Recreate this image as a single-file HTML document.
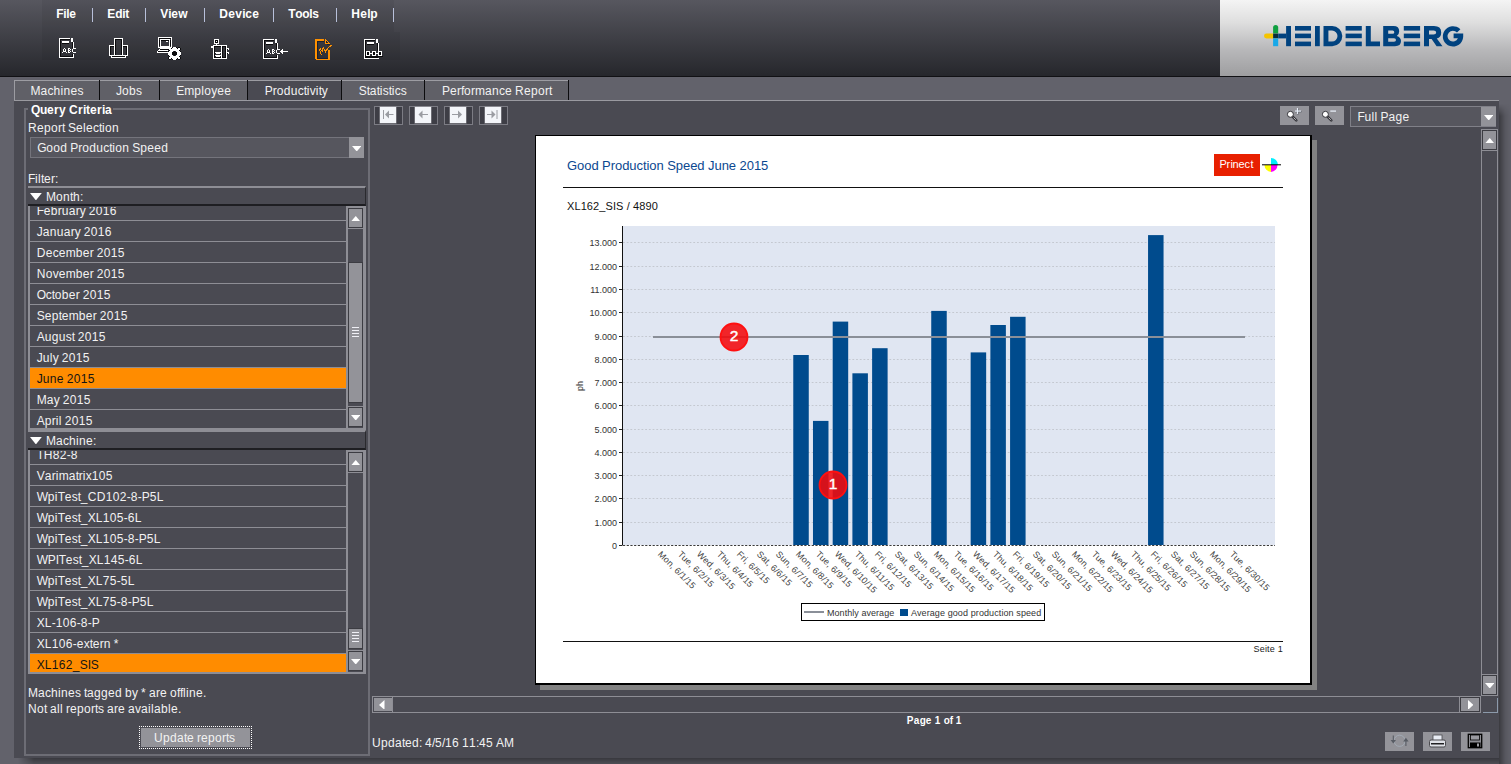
<!DOCTYPE html>
<html><head><meta charset="utf-8"><title>Prinect Analyze Point</title>
<style>
html,body{margin:0;padding:0;}
body{width:1511px;height:764px;overflow:hidden;position:relative;font-family:"Liberation Sans",sans-serif;background:#62626b;}
.b{position:absolute;}
.t{position:absolute;white-space:nowrap;font-family:"Liberation Sans",sans-serif;}
.clip{position:absolute;overflow:hidden;}
.t i{font-style:normal;display:inline-block;}
</style></head><body>
<div class="b" style="left:0px;top:77px;width:1511px;height:687px;background:#62626b;"></div>
<div class="b" style="left:0px;top:0px;width:1511px;height:76px;background:linear-gradient(#57575f,#26272c);"></div>
<div class="b" style="left:0px;top:76px;width:1511px;height:1px;background:#111114;"></div>
<div class="b" style="left:42px;top:0px;width:352px;height:32px;background:rgba(0,0,0,0.05);"></div>
<div class="b" style="left:42px;top:32px;width:358px;height:28px;background:rgba(0,0,0,0.05);"></div>
<div class="b" style="left:1220px;top:0px;width:291px;height:76px;background:linear-gradient(#f4f4f4 0%,#dedede 30%,#b8b8ba 65%,#9e9ea0 100%);"></div>
<div class="t" style="left:56.2px;top:7.84px;font-size:12px;line-height:12px;color:#ffffff;font-weight:bold;"><i style="width:7px">F</i><i style="width:3px">i</i><i style="width:3px">l</i><i style="width:7px">e</i></div>
<div class="t" style="left:107.2px;top:7.84px;font-size:12px;line-height:12px;color:#ffffff;font-weight:bold;"><i style="width:8px">E</i><i style="width:7px">d</i><i style="width:3px">i</i><i style="width:4px">t</i></div>
<div class="t" style="left:160.2px;top:7.84px;font-size:12px;line-height:12px;color:#ffffff;font-weight:bold;"><i style="width:8px">V</i><i style="width:3px">i</i><i style="width:7px">e</i><i style="width:9px">w</i></div>
<div class="t" style="left:219.2px;top:7.84px;font-size:12px;line-height:12px;color:#ffffff;font-weight:bold;"><i style="width:9px">D</i><i style="width:7px">e</i><i style="width:7px">v</i><i style="width:3px">i</i><i style="width:7px">c</i><i style="width:7px">e</i></div>
<div class="t" style="left:288.2px;top:7.84px;font-size:12px;line-height:12px;color:#ffffff;font-weight:bold;"><i style="width:7px">T</i><i style="width:7px">o</i><i style="width:7px">o</i><i style="width:3px">l</i><i style="width:7px">s</i></div>
<div class="t" style="left:351.2px;top:7.84px;font-size:12px;line-height:12px;color:#ffffff;font-weight:bold;"><i style="width:9px">H</i><i style="width:7px">e</i><i style="width:3px">l</i><i style="width:7px">p</i></div>
<div class="b" style="left:92px;top:8px;width:1px;height:14px;background:#b8c0da;"></div>
<div class="b" style="left:145px;top:8px;width:1px;height:14px;background:#b8c0da;"></div>
<div class="b" style="left:204px;top:8px;width:1px;height:14px;background:#b8c0da;"></div>
<div class="b" style="left:273px;top:8px;width:1px;height:14px;background:#b8c0da;"></div>
<div class="b" style="left:336px;top:8px;width:1px;height:14px;background:#b8c0da;"></div>
<div class="b" style="left:393px;top:8px;width:1px;height:14px;background:#b8c0da;"></div>
<svg class="b" style="left:55px;top:38px" width="22" height="20" shape-rendering="crispEdges"><rect x="4" y="0" width="11" height="1" fill="#ffffff"/><rect x="16" y="0" width="2" height="1" fill="#ffffff"/><rect x="4" y="1" width="1" height="1" fill="#ffffff"/><rect x="5" y="1" width="10" height="1" fill="#0a0a0c"/><rect x="16" y="1" width="2" height="1" fill="#ffffff"/><rect x="4" y="2" width="1" height="1" fill="#ffffff"/><rect x="5" y="2" width="1" height="1" fill="#0a0a0c"/><rect x="16" y="2" width="2" height="1" fill="#ffffff"/><rect x="4" y="3" width="1" height="1" fill="#ffffff"/><rect x="5" y="3" width="1" height="1" fill="#0a0a0c"/><rect x="7" y="3" width="7" height="1" fill="#ffffff"/><rect x="16" y="3" width="2" height="1" fill="#ffffff"/><rect x="4" y="4" width="1" height="1" fill="#ffffff"/><rect x="5" y="4" width="1" height="1" fill="#0a0a0c"/><rect x="7" y="4" width="7" height="1" fill="#ffffff"/><rect x="17" y="4" width="1" height="1" fill="#0a0a0c"/><rect x="18" y="4" width="1" height="1" fill="#ffffff"/><rect x="4" y="5" width="1" height="1" fill="#ffffff"/><rect x="5" y="5" width="1" height="1" fill="#0a0a0c"/><rect x="7" y="5" width="7" height="1" fill="#0a0a0c"/><rect x="17" y="5" width="1" height="1" fill="#0a0a0c"/><rect x="18" y="5" width="1" height="1" fill="#ffffff"/><rect x="4" y="6" width="1" height="1" fill="#ffffff"/><rect x="5" y="6" width="1" height="1" fill="#0a0a0c"/><rect x="17" y="6" width="1" height="1" fill="#0a0a0c"/><rect x="18" y="6" width="1" height="1" fill="#ffffff"/><rect x="4" y="7" width="1" height="1" fill="#ffffff"/><rect x="5" y="7" width="1" height="1" fill="#0a0a0c"/><rect x="17" y="7" width="1" height="1" fill="#0a0a0c"/><rect x="18" y="7" width="1" height="1" fill="#ffffff"/><rect x="4" y="8" width="1" height="1" fill="#ffffff"/><rect x="5" y="8" width="1" height="1" fill="#0a0a0c"/><rect x="17" y="8" width="1" height="1" fill="#0a0a0c"/><rect x="18" y="8" width="1" height="1" fill="#ffffff"/><rect x="4" y="9" width="1" height="1" fill="#ffffff"/><rect x="5" y="9" width="1" height="1" fill="#0a0a0c"/><rect x="17" y="9" width="1" height="1" fill="#0a0a0c"/><rect x="18" y="9" width="1" height="1" fill="#ffffff"/><rect x="4" y="10" width="1" height="1" fill="#ffffff"/><rect x="5" y="10" width="1" height="1" fill="#0a0a0c"/><rect x="9" y="10" width="1" height="1" fill="#ffffff"/><rect x="13" y="10" width="2" height="1" fill="#ffffff"/><rect x="18" y="10" width="3" height="1" fill="#ffffff"/><rect x="4" y="11" width="1" height="1" fill="#ffffff"/><rect x="5" y="11" width="1" height="1" fill="#0a0a0c"/><rect x="8" y="11" width="1" height="1" fill="#ffffff"/><rect x="10" y="11" width="1" height="1" fill="#ffffff"/><rect x="13" y="11" width="1" height="1" fill="#ffffff"/><rect x="15" y="11" width="1" height="1" fill="#ffffff"/><rect x="17" y="11" width="1" height="1" fill="#ffffff"/><rect x="4" y="12" width="1" height="1" fill="#ffffff"/><rect x="5" y="12" width="1" height="1" fill="#0a0a0c"/><rect x="8" y="12" width="1" height="1" fill="#ffffff"/><rect x="10" y="12" width="1" height="1" fill="#ffffff"/><rect x="13" y="12" width="2" height="1" fill="#ffffff"/><rect x="17" y="12" width="1" height="1" fill="#ffffff"/><rect x="4" y="13" width="1" height="1" fill="#ffffff"/><rect x="5" y="13" width="1" height="1" fill="#0a0a0c"/><rect x="8" y="13" width="3" height="1" fill="#ffffff"/><rect x="13" y="13" width="1" height="1" fill="#ffffff"/><rect x="15" y="13" width="1" height="1" fill="#ffffff"/><rect x="17" y="13" width="1" height="1" fill="#ffffff"/><rect x="4" y="14" width="1" height="1" fill="#ffffff"/><rect x="5" y="14" width="1" height="1" fill="#0a0a0c"/><rect x="7" y="14" width="1" height="1" fill="#ffffff"/><rect x="11" y="14" width="1" height="1" fill="#ffffff"/><rect x="13" y="14" width="2" height="1" fill="#ffffff"/><rect x="18" y="14" width="3" height="1" fill="#ffffff"/><rect x="4" y="15" width="1" height="1" fill="#ffffff"/><rect x="5" y="15" width="1" height="1" fill="#0a0a0c"/><rect x="4" y="16" width="1" height="1" fill="#ffffff"/><rect x="5" y="16" width="1" height="1" fill="#0a0a0c"/><rect x="17" y="16" width="1" height="1" fill="#0a0a0c"/><rect x="18" y="16" width="1" height="1" fill="#ffffff"/><rect x="4" y="17" width="1" height="1" fill="#ffffff"/><rect x="5" y="17" width="1" height="1" fill="#0a0a0c"/><rect x="17" y="17" width="1" height="1" fill="#0a0a0c"/><rect x="18" y="17" width="1" height="1" fill="#ffffff"/><rect x="4" y="18" width="1" height="1" fill="#ffffff"/><rect x="5" y="18" width="13" height="1" fill="#0a0a0c"/><rect x="18" y="18" width="1" height="1" fill="#ffffff"/><rect x="4" y="19" width="15" height="1" fill="#ffffff"/></svg><svg class="b" style="left:105px;top:38px" width="25" height="20" shape-rendering="crispEdges"><rect x="9" y="0" width="9" height="1" fill="#ffffff"/><rect x="9" y="1" width="1" height="1" fill="#ffffff"/><rect x="10" y="1" width="7" height="1" fill="#0a0a0c"/><rect x="17" y="1" width="1" height="1" fill="#ffffff"/><rect x="9" y="2" width="1" height="1" fill="#ffffff"/><rect x="10" y="2" width="1" height="1" fill="#0a0a0c"/><rect x="16" y="2" width="1" height="1" fill="#0a0a0c"/><rect x="17" y="2" width="1" height="1" fill="#ffffff"/><rect x="9" y="3" width="1" height="1" fill="#ffffff"/><rect x="10" y="3" width="1" height="1" fill="#0a0a0c"/><rect x="16" y="3" width="1" height="1" fill="#0a0a0c"/><rect x="17" y="3" width="1" height="1" fill="#ffffff"/><rect x="9" y="4" width="1" height="1" fill="#ffffff"/><rect x="10" y="4" width="1" height="1" fill="#0a0a0c"/><rect x="16" y="4" width="1" height="1" fill="#0a0a0c"/><rect x="17" y="4" width="1" height="1" fill="#ffffff"/><rect x="9" y="5" width="1" height="1" fill="#ffffff"/><rect x="10" y="5" width="1" height="1" fill="#0a0a0c"/><rect x="16" y="5" width="1" height="1" fill="#0a0a0c"/><rect x="17" y="5" width="1" height="1" fill="#ffffff"/><rect x="9" y="6" width="1" height="1" fill="#ffffff"/><rect x="10" y="6" width="1" height="1" fill="#0a0a0c"/><rect x="16" y="6" width="1" height="1" fill="#0a0a0c"/><rect x="17" y="6" width="1" height="1" fill="#ffffff"/><rect x="4" y="7" width="6" height="1" fill="#ffffff"/><rect x="10" y="7" width="1" height="1" fill="#0a0a0c"/><rect x="16" y="7" width="1" height="1" fill="#0a0a0c"/><rect x="17" y="7" width="6" height="1" fill="#ffffff"/><rect x="4" y="8" width="1" height="1" fill="#ffffff"/><rect x="5" y="8" width="4" height="1" fill="#0a0a0c"/><rect x="9" y="8" width="1" height="1" fill="#ffffff"/><rect x="10" y="8" width="1" height="1" fill="#0a0a0c"/><rect x="16" y="8" width="1" height="1" fill="#0a0a0c"/><rect x="17" y="8" width="1" height="1" fill="#ffffff"/><rect x="18" y="8" width="4" height="1" fill="#0a0a0c"/><rect x="22" y="8" width="1" height="1" fill="#ffffff"/><rect x="4" y="9" width="1" height="1" fill="#ffffff"/><rect x="5" y="9" width="1" height="1" fill="#0a0a0c"/><rect x="9" y="9" width="1" height="1" fill="#ffffff"/><rect x="10" y="9" width="1" height="1" fill="#0a0a0c"/><rect x="16" y="9" width="1" height="1" fill="#0a0a0c"/><rect x="17" y="9" width="1" height="1" fill="#ffffff"/><rect x="21" y="9" width="1" height="1" fill="#0a0a0c"/><rect x="22" y="9" width="1" height="1" fill="#ffffff"/><rect x="4" y="10" width="1" height="1" fill="#ffffff"/><rect x="5" y="10" width="1" height="1" fill="#0a0a0c"/><rect x="9" y="10" width="1" height="1" fill="#ffffff"/><rect x="10" y="10" width="1" height="1" fill="#0a0a0c"/><rect x="16" y="10" width="1" height="1" fill="#0a0a0c"/><rect x="17" y="10" width="1" height="1" fill="#ffffff"/><rect x="21" y="10" width="1" height="1" fill="#0a0a0c"/><rect x="22" y="10" width="1" height="1" fill="#ffffff"/><rect x="4" y="11" width="1" height="1" fill="#ffffff"/><rect x="5" y="11" width="1" height="1" fill="#0a0a0c"/><rect x="9" y="11" width="1" height="1" fill="#ffffff"/><rect x="10" y="11" width="1" height="1" fill="#0a0a0c"/><rect x="16" y="11" width="1" height="1" fill="#0a0a0c"/><rect x="17" y="11" width="1" height="1" fill="#ffffff"/><rect x="21" y="11" width="1" height="1" fill="#0a0a0c"/><rect x="22" y="11" width="1" height="1" fill="#ffffff"/><rect x="4" y="12" width="1" height="1" fill="#ffffff"/><rect x="5" y="12" width="1" height="1" fill="#0a0a0c"/><rect x="9" y="12" width="1" height="1" fill="#ffffff"/><rect x="10" y="12" width="1" height="1" fill="#0a0a0c"/><rect x="16" y="12" width="1" height="1" fill="#0a0a0c"/><rect x="17" y="12" width="1" height="1" fill="#ffffff"/><rect x="21" y="12" width="1" height="1" fill="#0a0a0c"/><rect x="22" y="12" width="1" height="1" fill="#ffffff"/><rect x="4" y="13" width="1" height="1" fill="#ffffff"/><rect x="5" y="13" width="1" height="1" fill="#0a0a0c"/><rect x="9" y="13" width="1" height="1" fill="#ffffff"/><rect x="10" y="13" width="1" height="1" fill="#0a0a0c"/><rect x="16" y="13" width="1" height="1" fill="#0a0a0c"/><rect x="17" y="13" width="1" height="1" fill="#ffffff"/><rect x="21" y="13" width="1" height="1" fill="#0a0a0c"/><rect x="22" y="13" width="1" height="1" fill="#ffffff"/><rect x="4" y="14" width="1" height="1" fill="#ffffff"/><rect x="5" y="14" width="1" height="1" fill="#0a0a0c"/><rect x="9" y="14" width="1" height="1" fill="#ffffff"/><rect x="10" y="14" width="1" height="1" fill="#0a0a0c"/><rect x="16" y="14" width="1" height="1" fill="#0a0a0c"/><rect x="17" y="14" width="1" height="1" fill="#ffffff"/><rect x="21" y="14" width="1" height="1" fill="#0a0a0c"/><rect x="22" y="14" width="1" height="1" fill="#ffffff"/><rect x="4" y="15" width="1" height="1" fill="#ffffff"/><rect x="5" y="15" width="1" height="1" fill="#0a0a0c"/><rect x="9" y="15" width="1" height="1" fill="#ffffff"/><rect x="10" y="15" width="1" height="1" fill="#0a0a0c"/><rect x="16" y="15" width="1" height="1" fill="#0a0a0c"/><rect x="17" y="15" width="1" height="1" fill="#ffffff"/><rect x="21" y="15" width="1" height="1" fill="#0a0a0c"/><rect x="22" y="15" width="1" height="1" fill="#ffffff"/><rect x="4" y="16" width="1" height="1" fill="#ffffff"/><rect x="5" y="16" width="1" height="1" fill="#0a0a0c"/><rect x="9" y="16" width="1" height="1" fill="#ffffff"/><rect x="10" y="16" width="1" height="1" fill="#0a0a0c"/><rect x="16" y="16" width="1" height="1" fill="#0a0a0c"/><rect x="17" y="16" width="1" height="1" fill="#ffffff"/><rect x="21" y="16" width="1" height="1" fill="#0a0a0c"/><rect x="22" y="16" width="1" height="1" fill="#ffffff"/><rect x="4" y="17" width="19" height="1" fill="#ffffff"/><rect x="6" y="18" width="1" height="1" fill="#ffffff"/><rect x="7" y="18" width="13" height="1" fill="#0a0a0c"/><rect x="20" y="18" width="1" height="1" fill="#ffffff"/><rect x="6" y="19" width="15" height="1" fill="#ffffff"/></svg><svg class="b" style="left:154px;top:35px" width="27" height="25" shape-rendering="crispEdges"><rect x="4" y="2" width="14" height="1" fill="#ffffff"/><rect x="4" y="3" width="1" height="1" fill="#ffffff"/><rect x="5" y="3" width="12" height="1" fill="#0a0a0c"/><rect x="17" y="3" width="1" height="1" fill="#ffffff"/><rect x="4" y="4" width="1" height="1" fill="#ffffff"/><rect x="6" y="4" width="10" height="1" fill="#ffffff"/><rect x="17" y="4" width="1" height="1" fill="#ffffff"/><rect x="4" y="5" width="1" height="1" fill="#ffffff"/><rect x="5" y="5" width="1" height="1" fill="#0a0a0c"/><rect x="6" y="5" width="1" height="1" fill="#ffffff"/><rect x="7" y="5" width="8" height="1" fill="#0a0a0c"/><rect x="15" y="5" width="1" height="1" fill="#ffffff"/><rect x="16" y="5" width="1" height="1" fill="#0a0a0c"/><rect x="17" y="5" width="1" height="1" fill="#ffffff"/><rect x="4" y="6" width="1" height="1" fill="#ffffff"/><rect x="5" y="6" width="1" height="1" fill="#0a0a0c"/><rect x="6" y="6" width="1" height="1" fill="#ffffff"/><rect x="12" y="6" width="2" height="1" fill="#ffffff"/><rect x="15" y="6" width="1" height="1" fill="#ffffff"/><rect x="16" y="6" width="1" height="1" fill="#0a0a0c"/><rect x="17" y="6" width="1" height="1" fill="#ffffff"/><rect x="4" y="7" width="1" height="1" fill="#ffffff"/><rect x="5" y="7" width="1" height="1" fill="#0a0a0c"/><rect x="6" y="7" width="1" height="1" fill="#ffffff"/><rect x="15" y="7" width="1" height="1" fill="#ffffff"/><rect x="16" y="7" width="1" height="1" fill="#0a0a0c"/><rect x="17" y="7" width="1" height="1" fill="#ffffff"/><rect x="4" y="8" width="1" height="1" fill="#ffffff"/><rect x="5" y="8" width="1" height="1" fill="#0a0a0c"/><rect x="6" y="8" width="1" height="1" fill="#ffffff"/><rect x="15" y="8" width="1" height="1" fill="#ffffff"/><rect x="16" y="8" width="1" height="1" fill="#0a0a0c"/><rect x="17" y="8" width="1" height="1" fill="#ffffff"/><rect x="4" y="9" width="1" height="1" fill="#ffffff"/><rect x="5" y="9" width="1" height="1" fill="#0a0a0c"/><rect x="6" y="9" width="1" height="1" fill="#ffffff"/><rect x="15" y="9" width="1" height="1" fill="#ffffff"/><rect x="16" y="9" width="1" height="1" fill="#0a0a0c"/><rect x="17" y="9" width="1" height="1" fill="#ffffff"/><rect x="4" y="10" width="1" height="1" fill="#ffffff"/><rect x="5" y="10" width="1" height="1" fill="#0a0a0c"/><rect x="6" y="10" width="1" height="1" fill="#ffffff"/><rect x="15" y="10" width="1" height="1" fill="#ffffff"/><rect x="16" y="10" width="1" height="1" fill="#0a0a0c"/><rect x="17" y="10" width="1" height="1" fill="#ffffff"/><rect x="4" y="11" width="1" height="1" fill="#ffffff"/><rect x="6" y="11" width="10" height="1" fill="#ffffff"/><rect x="17" y="11" width="1" height="1" fill="#ffffff"/><rect x="4" y="12" width="14" height="1" fill="#ffffff"/><rect x="18" y="12" width="1" height="1" fill="#0a0a0c"/><rect x="19" y="12" width="3" height="1" fill="#ffffff"/><rect x="22" y="12" width="1" height="1" fill="#0a0a0c"/><rect x="24" y="12" width="2" height="1" fill="#0a0a0c"/><rect x="6" y="13" width="11" height="1" fill="#ffffff"/><rect x="17" y="13" width="1" height="1" fill="#0a0a0c"/><rect x="18" y="13" width="5" height="1" fill="#ffffff"/><rect x="23" y="13" width="1" height="1" fill="#0a0a0c"/><rect x="24" y="13" width="2" height="1" fill="#ffffff"/><rect x="26" y="13" width="1" height="1" fill="#0a0a0c"/><rect x="5" y="14" width="1" height="1" fill="#ffffff"/><rect x="6" y="14" width="9" height="1" fill="#0a0a0c"/><rect x="15" y="14" width="11" height="1" fill="#ffffff"/><rect x="26" y="14" width="1" height="1" fill="#0a0a0c"/><rect x="4" y="15" width="10" height="1" fill="#ffffff"/><rect x="15" y="15" width="1" height="1" fill="#0a0a0c"/><rect x="16" y="15" width="9" height="1" fill="#ffffff"/><rect x="25" y="15" width="1" height="1" fill="#0a0a0c"/><rect x="3" y="16" width="1" height="1" fill="#ffffff"/><rect x="4" y="16" width="9" height="1" fill="#0a0a0c"/><rect x="14" y="16" width="1" height="1" fill="#0a0a0c"/><rect x="15" y="16" width="4" height="1" fill="#ffffff"/><rect x="20" y="16" width="1" height="1" fill="#0a0a0c"/><rect x="22" y="16" width="4" height="1" fill="#ffffff"/><rect x="26" y="16" width="1" height="1" fill="#0a0a0c"/><rect x="3" y="17" width="15" height="1" fill="#ffffff"/><rect x="18" y="17" width="5" height="1" fill="#0a0a0c"/><rect x="23" y="17" width="4" height="1" fill="#ffffff"/><rect x="14" y="18" width="4" height="1" fill="#ffffff"/><rect x="18" y="18" width="5" height="1" fill="#0a0a0c"/><rect x="23" y="18" width="4" height="1" fill="#ffffff"/><rect x="14" y="19" width="4" height="1" fill="#ffffff"/><rect x="18" y="19" width="5" height="1" fill="#0a0a0c"/><rect x="23" y="19" width="4" height="1" fill="#ffffff"/><rect x="14" y="20" width="1" height="1" fill="#0a0a0c"/><rect x="15" y="20" width="4" height="1" fill="#ffffff"/><rect x="20" y="20" width="1" height="1" fill="#0a0a0c"/><rect x="22" y="20" width="4" height="1" fill="#ffffff"/><rect x="26" y="20" width="1" height="1" fill="#0a0a0c"/><rect x="15" y="21" width="1" height="1" fill="#0a0a0c"/><rect x="16" y="21" width="9" height="1" fill="#ffffff"/><rect x="25" y="21" width="1" height="1" fill="#0a0a0c"/><rect x="14" y="22" width="1" height="1" fill="#0a0a0c"/><rect x="15" y="22" width="11" height="1" fill="#ffffff"/><rect x="26" y="22" width="1" height="1" fill="#0a0a0c"/><rect x="14" y="23" width="1" height="1" fill="#0a0a0c"/><rect x="15" y="23" width="2" height="1" fill="#ffffff"/><rect x="17" y="23" width="1" height="1" fill="#0a0a0c"/><rect x="18" y="23" width="5" height="1" fill="#ffffff"/><rect x="23" y="23" width="1" height="1" fill="#0a0a0c"/><rect x="24" y="23" width="2" height="1" fill="#ffffff"/><rect x="26" y="23" width="1" height="1" fill="#0a0a0c"/><rect x="15" y="24" width="2" height="1" fill="#0a0a0c"/><rect x="18" y="24" width="1" height="1" fill="#0a0a0c"/><rect x="19" y="24" width="3" height="1" fill="#ffffff"/><rect x="22" y="24" width="1" height="1" fill="#0a0a0c"/><rect x="24" y="24" width="2" height="1" fill="#0a0a0c"/></svg><svg class="b" style="left:208px;top:39px" width="25" height="20" shape-rendering="crispEdges"><rect x="6" y="0" width="5" height="1" fill="#ffffff"/><rect x="6" y="1" width="1" height="1" fill="#ffffff"/><rect x="7" y="1" width="3" height="1" fill="#0a0a0c"/><rect x="10" y="1" width="1" height="1" fill="#ffffff"/><rect x="6" y="2" width="1" height="1" fill="#ffffff"/><rect x="7" y="2" width="1" height="1" fill="#0a0a0c"/><rect x="8" y="2" width="1" height="1" fill="#ffffff"/><rect x="9" y="2" width="1" height="1" fill="#0a0a0c"/><rect x="10" y="2" width="1" height="1" fill="#ffffff"/><rect x="6" y="3" width="1" height="1" fill="#ffffff"/><rect x="7" y="3" width="3" height="1" fill="#0a0a0c"/><rect x="10" y="3" width="1" height="1" fill="#ffffff"/><rect x="6" y="4" width="5" height="1" fill="#ffffff"/><rect x="8" y="5" width="1" height="1" fill="#ffffff"/><rect x="5" y="6" width="14" height="1" fill="#ffffff"/><rect x="3" y="7" width="3" height="1" fill="#ffffff"/><rect x="6" y="7" width="7" height="1" fill="#0a0a0c"/><rect x="13" y="7" width="1" height="1" fill="#ffffff"/><rect x="14" y="7" width="4" height="1" fill="#0a0a0c"/><rect x="18" y="7" width="1" height="1" fill="#ffffff"/><rect x="3" y="8" width="3" height="1" fill="#ffffff"/><rect x="6" y="8" width="1" height="1" fill="#0a0a0c"/><rect x="13" y="8" width="1" height="1" fill="#ffffff"/><rect x="14" y="8" width="1" height="1" fill="#0a0a0c"/><rect x="17" y="8" width="1" height="1" fill="#0a0a0c"/><rect x="18" y="8" width="1" height="1" fill="#ffffff"/><rect x="5" y="9" width="1" height="1" fill="#ffffff"/><rect x="6" y="9" width="1" height="1" fill="#0a0a0c"/><rect x="13" y="9" width="1" height="1" fill="#ffffff"/><rect x="14" y="9" width="1" height="1" fill="#0a0a0c"/><rect x="17" y="9" width="1" height="1" fill="#0a0a0c"/><rect x="18" y="9" width="3" height="1" fill="#ffffff"/><rect x="5" y="10" width="1" height="1" fill="#ffffff"/><rect x="6" y="10" width="1" height="1" fill="#0a0a0c"/><rect x="13" y="10" width="1" height="1" fill="#ffffff"/><rect x="14" y="10" width="1" height="1" fill="#0a0a0c"/><rect x="17" y="10" width="1" height="1" fill="#0a0a0c"/><rect x="18" y="10" width="1" height="1" fill="#ffffff"/><rect x="19" y="10" width="1" height="1" fill="#0a0a0c"/><rect x="20" y="10" width="1" height="1" fill="#ffffff"/><rect x="5" y="11" width="1" height="1" fill="#ffffff"/><rect x="6" y="11" width="1" height="1" fill="#0a0a0c"/><rect x="13" y="11" width="1" height="1" fill="#ffffff"/><rect x="14" y="11" width="1" height="1" fill="#0a0a0c"/><rect x="17" y="11" width="1" height="1" fill="#0a0a0c"/><rect x="18" y="11" width="1" height="1" fill="#ffffff"/><rect x="5" y="12" width="1" height="1" fill="#ffffff"/><rect x="6" y="12" width="1" height="1" fill="#0a0a0c"/><rect x="13" y="12" width="1" height="1" fill="#ffffff"/><rect x="14" y="12" width="1" height="1" fill="#0a0a0c"/><rect x="17" y="12" width="1" height="1" fill="#0a0a0c"/><rect x="18" y="12" width="1" height="1" fill="#ffffff"/><rect x="5" y="13" width="1" height="1" fill="#ffffff"/><rect x="6" y="13" width="1" height="1" fill="#0a0a0c"/><rect x="7" y="13" width="7" height="1" fill="#ffffff"/><rect x="14" y="13" width="1" height="1" fill="#0a0a0c"/><rect x="17" y="13" width="1" height="1" fill="#0a0a0c"/><rect x="18" y="13" width="3" height="1" fill="#ffffff"/><rect x="5" y="14" width="1" height="1" fill="#ffffff"/><rect x="6" y="14" width="1" height="1" fill="#0a0a0c"/><rect x="8" y="14" width="4" height="1" fill="#ffffff"/><rect x="13" y="14" width="1" height="1" fill="#ffffff"/><rect x="14" y="14" width="1" height="1" fill="#0a0a0c"/><rect x="17" y="14" width="1" height="1" fill="#0a0a0c"/><rect x="18" y="14" width="1" height="1" fill="#ffffff"/><rect x="19" y="14" width="1" height="1" fill="#0a0a0c"/><rect x="20" y="14" width="1" height="1" fill="#ffffff"/><rect x="5" y="15" width="1" height="1" fill="#ffffff"/><rect x="6" y="15" width="1" height="1" fill="#0a0a0c"/><rect x="13" y="15" width="1" height="1" fill="#ffffff"/><rect x="14" y="15" width="1" height="1" fill="#0a0a0c"/><rect x="17" y="15" width="1" height="1" fill="#0a0a0c"/><rect x="18" y="15" width="1" height="1" fill="#ffffff"/><rect x="5" y="16" width="1" height="1" fill="#ffffff"/><rect x="6" y="16" width="1" height="1" fill="#0a0a0c"/><rect x="7" y="16" width="7" height="1" fill="#ffffff"/><rect x="14" y="16" width="1" height="1" fill="#0a0a0c"/><rect x="17" y="16" width="1" height="1" fill="#0a0a0c"/><rect x="18" y="16" width="1" height="1" fill="#ffffff"/><rect x="5" y="17" width="1" height="1" fill="#ffffff"/><rect x="6" y="17" width="1" height="1" fill="#0a0a0c"/><rect x="8" y="17" width="4" height="1" fill="#ffffff"/><rect x="13" y="17" width="1" height="1" fill="#ffffff"/><rect x="14" y="17" width="1" height="1" fill="#0a0a0c"/><rect x="17" y="17" width="1" height="1" fill="#0a0a0c"/><rect x="18" y="17" width="1" height="1" fill="#ffffff"/><rect x="5" y="18" width="1" height="1" fill="#ffffff"/><rect x="6" y="18" width="7" height="1" fill="#0a0a0c"/><rect x="13" y="18" width="1" height="1" fill="#ffffff"/><rect x="14" y="18" width="4" height="1" fill="#0a0a0c"/><rect x="18" y="18" width="1" height="1" fill="#ffffff"/><rect x="5" y="19" width="14" height="1" fill="#ffffff"/></svg><svg class="b" style="left:260px;top:39px" width="29" height="20" shape-rendering="crispEdges"><rect x="3" y="0" width="11" height="1" fill="#ffffff"/><rect x="15" y="0" width="2" height="1" fill="#ffffff"/><rect x="3" y="1" width="1" height="1" fill="#ffffff"/><rect x="4" y="1" width="10" height="1" fill="#0a0a0c"/><rect x="15" y="1" width="2" height="1" fill="#ffffff"/><rect x="3" y="2" width="1" height="1" fill="#ffffff"/><rect x="4" y="2" width="1" height="1" fill="#0a0a0c"/><rect x="15" y="2" width="2" height="1" fill="#ffffff"/><rect x="3" y="3" width="1" height="1" fill="#ffffff"/><rect x="4" y="3" width="1" height="1" fill="#0a0a0c"/><rect x="6" y="3" width="7" height="1" fill="#ffffff"/><rect x="15" y="3" width="2" height="1" fill="#ffffff"/><rect x="3" y="4" width="1" height="1" fill="#ffffff"/><rect x="4" y="4" width="1" height="1" fill="#0a0a0c"/><rect x="6" y="4" width="7" height="1" fill="#ffffff"/><rect x="16" y="4" width="1" height="1" fill="#0a0a0c"/><rect x="17" y="4" width="1" height="1" fill="#ffffff"/><rect x="3" y="5" width="1" height="1" fill="#ffffff"/><rect x="4" y="5" width="1" height="1" fill="#0a0a0c"/><rect x="6" y="5" width="7" height="1" fill="#0a0a0c"/><rect x="16" y="5" width="1" height="1" fill="#0a0a0c"/><rect x="17" y="5" width="1" height="1" fill="#ffffff"/><rect x="3" y="6" width="1" height="1" fill="#ffffff"/><rect x="4" y="6" width="1" height="1" fill="#0a0a0c"/><rect x="16" y="6" width="1" height="1" fill="#0a0a0c"/><rect x="17" y="6" width="1" height="1" fill="#ffffff"/><rect x="3" y="7" width="1" height="1" fill="#ffffff"/><rect x="4" y="7" width="1" height="1" fill="#0a0a0c"/><rect x="16" y="7" width="1" height="1" fill="#0a0a0c"/><rect x="17" y="7" width="1" height="1" fill="#ffffff"/><rect x="3" y="8" width="1" height="1" fill="#ffffff"/><rect x="4" y="8" width="1" height="1" fill="#0a0a0c"/><rect x="16" y="8" width="1" height="1" fill="#0a0a0c"/><rect x="17" y="8" width="1" height="1" fill="#ffffff"/><rect x="3" y="9" width="1" height="1" fill="#ffffff"/><rect x="4" y="9" width="1" height="1" fill="#0a0a0c"/><rect x="16" y="9" width="1" height="1" fill="#0a0a0c"/><rect x="17" y="9" width="1" height="1" fill="#ffffff"/><rect x="3" y="10" width="1" height="1" fill="#ffffff"/><rect x="4" y="10" width="1" height="1" fill="#0a0a0c"/><rect x="8" y="10" width="1" height="1" fill="#ffffff"/><rect x="12" y="10" width="2" height="1" fill="#ffffff"/><rect x="17" y="10" width="3" height="1" fill="#ffffff"/><rect x="22" y="10" width="1" height="1" fill="#ffffff"/><rect x="3" y="11" width="1" height="1" fill="#ffffff"/><rect x="4" y="11" width="1" height="1" fill="#0a0a0c"/><rect x="7" y="11" width="1" height="1" fill="#ffffff"/><rect x="9" y="11" width="1" height="1" fill="#ffffff"/><rect x="12" y="11" width="1" height="1" fill="#ffffff"/><rect x="14" y="11" width="1" height="1" fill="#ffffff"/><rect x="16" y="11" width="1" height="1" fill="#ffffff"/><rect x="21" y="11" width="2" height="1" fill="#ffffff"/><rect x="3" y="12" width="1" height="1" fill="#ffffff"/><rect x="4" y="12" width="1" height="1" fill="#0a0a0c"/><rect x="7" y="12" width="1" height="1" fill="#ffffff"/><rect x="9" y="12" width="1" height="1" fill="#ffffff"/><rect x="12" y="12" width="2" height="1" fill="#ffffff"/><rect x="16" y="12" width="1" height="1" fill="#ffffff"/><rect x="20" y="12" width="8" height="1" fill="#ffffff"/><rect x="3" y="13" width="1" height="1" fill="#ffffff"/><rect x="4" y="13" width="1" height="1" fill="#0a0a0c"/><rect x="7" y="13" width="3" height="1" fill="#ffffff"/><rect x="12" y="13" width="1" height="1" fill="#ffffff"/><rect x="14" y="13" width="1" height="1" fill="#ffffff"/><rect x="16" y="13" width="1" height="1" fill="#ffffff"/><rect x="21" y="13" width="2" height="1" fill="#ffffff"/><rect x="3" y="14" width="1" height="1" fill="#ffffff"/><rect x="4" y="14" width="1" height="1" fill="#0a0a0c"/><rect x="6" y="14" width="1" height="1" fill="#ffffff"/><rect x="10" y="14" width="1" height="1" fill="#ffffff"/><rect x="12" y="14" width="2" height="1" fill="#ffffff"/><rect x="17" y="14" width="3" height="1" fill="#ffffff"/><rect x="22" y="14" width="1" height="1" fill="#ffffff"/><rect x="3" y="15" width="1" height="1" fill="#ffffff"/><rect x="4" y="15" width="1" height="1" fill="#0a0a0c"/><rect x="3" y="16" width="1" height="1" fill="#ffffff"/><rect x="4" y="16" width="1" height="1" fill="#0a0a0c"/><rect x="16" y="16" width="1" height="1" fill="#0a0a0c"/><rect x="17" y="16" width="1" height="1" fill="#ffffff"/><rect x="3" y="17" width="1" height="1" fill="#ffffff"/><rect x="4" y="17" width="1" height="1" fill="#0a0a0c"/><rect x="16" y="17" width="1" height="1" fill="#0a0a0c"/><rect x="17" y="17" width="1" height="1" fill="#ffffff"/><rect x="3" y="18" width="1" height="1" fill="#ffffff"/><rect x="4" y="18" width="13" height="1" fill="#0a0a0c"/><rect x="17" y="18" width="1" height="1" fill="#ffffff"/><rect x="3" y="19" width="15" height="1" fill="#ffffff"/></svg><svg class="b" style="left:310px;top:39px" width="25" height="21" shape-rendering="crispEdges"><rect x="5" y="0" width="9" height="1" fill="#ff9100"/><rect x="15" y="0" width="1" height="1" fill="#ff9100"/><rect x="5" y="1" width="9" height="1" fill="#ff9100"/><rect x="15" y="1" width="2" height="1" fill="#ff9100"/><rect x="5" y="2" width="2" height="1" fill="#ff9100"/><rect x="7" y="2" width="7" height="1" fill="#1a2030"/><rect x="15" y="2" width="1" height="1" fill="#ff9100"/><rect x="16" y="2" width="1" height="1" fill="#1a2030"/><rect x="17" y="2" width="1" height="1" fill="#ff9100"/><rect x="5" y="3" width="2" height="1" fill="#ff9100"/><rect x="7" y="3" width="1" height="1" fill="#1a2030"/><rect x="15" y="3" width="1" height="1" fill="#ff9100"/><rect x="16" y="3" width="2" height="1" fill="#1a2030"/><rect x="18" y="3" width="1" height="1" fill="#ff9100"/><rect x="5" y="4" width="2" height="1" fill="#ff9100"/><rect x="7" y="4" width="1" height="1" fill="#1a2030"/><rect x="15" y="4" width="5" height="1" fill="#ff9100"/><rect x="5" y="5" width="2" height="1" fill="#ff9100"/><rect x="7" y="5" width="1" height="1" fill="#1a2030"/><rect x="17" y="5" width="3" height="1" fill="#1a2030"/><rect x="5" y="6" width="2" height="1" fill="#ff9100"/><rect x="7" y="6" width="1" height="1" fill="#1a2030"/><rect x="20" y="6" width="2" height="1" fill="#ff9100"/><rect x="5" y="7" width="2" height="1" fill="#ff9100"/><rect x="7" y="7" width="1" height="1" fill="#1a2030"/><rect x="19" y="7" width="2" height="1" fill="#ff9100"/><rect x="5" y="8" width="2" height="1" fill="#ff9100"/><rect x="7" y="8" width="1" height="1" fill="#1a2030"/><rect x="13" y="8" width="1" height="1" fill="#ff9100"/><rect x="18" y="8" width="1" height="1" fill="#ff9100"/><rect x="5" y="9" width="2" height="1" fill="#ff9100"/><rect x="7" y="9" width="1" height="1" fill="#1a2030"/><rect x="10" y="9" width="1" height="1" fill="#ff9100"/><rect x="12" y="9" width="2" height="1" fill="#ff9100"/><rect x="17" y="9" width="1" height="1" fill="#ff9100"/><rect x="5" y="10" width="2" height="1" fill="#ff9100"/><rect x="7" y="10" width="1" height="1" fill="#1a2030"/><rect x="9" y="10" width="2" height="1" fill="#ff9100"/><rect x="12" y="10" width="1" height="1" fill="#ff9100"/><rect x="14" y="10" width="1" height="1" fill="#ff9100"/><rect x="16" y="10" width="2" height="1" fill="#ff9100"/><rect x="5" y="11" width="2" height="1" fill="#ff9100"/><rect x="7" y="11" width="1" height="1" fill="#1a2030"/><rect x="9" y="11" width="1" height="1" fill="#ff9100"/><rect x="11" y="11" width="2" height="1" fill="#ff9100"/><rect x="14" y="11" width="3" height="1" fill="#ff9100"/><rect x="18" y="11" width="2" height="1" fill="#ff9100"/><rect x="5" y="12" width="2" height="1" fill="#ff9100"/><rect x="7" y="12" width="1" height="1" fill="#1a2030"/><rect x="10" y="12" width="1" height="1" fill="#ff9100"/><rect x="12" y="12" width="1" height="1" fill="#ff9100"/><rect x="15" y="12" width="1" height="1" fill="#ff9100"/><rect x="18" y="12" width="2" height="1" fill="#ff9100"/><rect x="5" y="13" width="2" height="1" fill="#ff9100"/><rect x="7" y="13" width="1" height="1" fill="#1a2030"/><rect x="10" y="13" width="1" height="1" fill="#ff9100"/><rect x="15" y="13" width="1" height="1" fill="#ff9100"/><rect x="18" y="13" width="2" height="1" fill="#ff9100"/><rect x="5" y="14" width="2" height="1" fill="#ff9100"/><rect x="7" y="14" width="1" height="1" fill="#1a2030"/><rect x="10" y="14" width="1" height="1" fill="#ff9100"/><rect x="18" y="14" width="2" height="1" fill="#ff9100"/><rect x="5" y="15" width="2" height="1" fill="#ff9100"/><rect x="7" y="15" width="1" height="1" fill="#1a2030"/><rect x="11" y="15" width="1" height="1" fill="#ff9100"/><rect x="18" y="15" width="2" height="1" fill="#ff9100"/><rect x="5" y="16" width="2" height="1" fill="#ff9100"/><rect x="7" y="16" width="1" height="1" fill="#1a2030"/><rect x="18" y="16" width="2" height="1" fill="#ff9100"/><rect x="5" y="17" width="2" height="1" fill="#ff9100"/><rect x="7" y="17" width="1" height="1" fill="#1a2030"/><rect x="18" y="17" width="2" height="1" fill="#ff9100"/><rect x="5" y="18" width="2" height="1" fill="#ff9100"/><rect x="7" y="18" width="1" height="1" fill="#1a2030"/><rect x="18" y="18" width="2" height="1" fill="#ff9100"/><rect x="5" y="19" width="2" height="1" fill="#ff9100"/><rect x="7" y="19" width="11" height="1" fill="#1a2030"/><rect x="18" y="19" width="2" height="1" fill="#ff9100"/><rect x="6" y="20" width="14" height="1" fill="#ff9100"/></svg><svg class="b" style="left:361px;top:39px" width="23" height="20" shape-rendering="crispEdges"><rect x="3" y="0" width="11" height="1" fill="#ffffff"/><rect x="15" y="0" width="2" height="1" fill="#ffffff"/><rect x="3" y="1" width="1" height="1" fill="#ffffff"/><rect x="4" y="1" width="10" height="1" fill="#0a0a0c"/><rect x="15" y="1" width="2" height="1" fill="#ffffff"/><rect x="3" y="2" width="1" height="1" fill="#ffffff"/><rect x="4" y="2" width="1" height="1" fill="#0a0a0c"/><rect x="15" y="2" width="2" height="1" fill="#ffffff"/><rect x="3" y="3" width="1" height="1" fill="#ffffff"/><rect x="4" y="3" width="1" height="1" fill="#0a0a0c"/><rect x="6" y="3" width="7" height="1" fill="#ffffff"/><rect x="15" y="3" width="2" height="1" fill="#ffffff"/><rect x="3" y="4" width="1" height="1" fill="#ffffff"/><rect x="4" y="4" width="1" height="1" fill="#0a0a0c"/><rect x="6" y="4" width="7" height="1" fill="#ffffff"/><rect x="16" y="4" width="1" height="1" fill="#0a0a0c"/><rect x="17" y="4" width="1" height="1" fill="#ffffff"/><rect x="3" y="5" width="1" height="1" fill="#ffffff"/><rect x="4" y="5" width="1" height="1" fill="#0a0a0c"/><rect x="6" y="5" width="7" height="1" fill="#0a0a0c"/><rect x="16" y="5" width="1" height="1" fill="#0a0a0c"/><rect x="17" y="5" width="1" height="1" fill="#ffffff"/><rect x="3" y="6" width="1" height="1" fill="#ffffff"/><rect x="4" y="6" width="1" height="1" fill="#0a0a0c"/><rect x="16" y="6" width="1" height="1" fill="#0a0a0c"/><rect x="17" y="6" width="1" height="1" fill="#ffffff"/><rect x="3" y="7" width="1" height="1" fill="#ffffff"/><rect x="4" y="7" width="1" height="1" fill="#0a0a0c"/><rect x="16" y="7" width="1" height="1" fill="#0a0a0c"/><rect x="17" y="7" width="1" height="1" fill="#ffffff"/><rect x="3" y="8" width="1" height="1" fill="#ffffff"/><rect x="4" y="8" width="1" height="1" fill="#0a0a0c"/><rect x="16" y="8" width="1" height="1" fill="#0a0a0c"/><rect x="17" y="8" width="1" height="1" fill="#ffffff"/><rect x="3" y="9" width="1" height="1" fill="#ffffff"/><rect x="4" y="9" width="1" height="1" fill="#0a0a0c"/><rect x="16" y="9" width="1" height="1" fill="#0a0a0c"/><rect x="17" y="9" width="1" height="1" fill="#ffffff"/><rect x="3" y="10" width="1" height="1" fill="#ffffff"/><rect x="4" y="10" width="1" height="1" fill="#0a0a0c"/><rect x="16" y="10" width="1" height="1" fill="#0a0a0c"/><rect x="17" y="10" width="1" height="1" fill="#ffffff"/><rect x="3" y="11" width="1" height="1" fill="#ffffff"/><rect x="4" y="11" width="1" height="1" fill="#0a0a0c"/><rect x="16" y="11" width="1" height="1" fill="#0a0a0c"/><rect x="17" y="11" width="1" height="1" fill="#ffffff"/><rect x="3" y="12" width="1" height="1" fill="#ffffff"/><rect x="4" y="12" width="1" height="1" fill="#0a0a0c"/><rect x="5" y="12" width="4" height="1" fill="#ffffff"/><rect x="11" y="12" width="4" height="1" fill="#ffffff"/><rect x="17" y="12" width="4" height="1" fill="#ffffff"/><rect x="3" y="13" width="1" height="1" fill="#ffffff"/><rect x="4" y="13" width="1" height="1" fill="#0a0a0c"/><rect x="5" y="13" width="1" height="1" fill="#ffffff"/><rect x="6" y="13" width="2" height="1" fill="#0a0a0c"/><rect x="8" y="13" width="1" height="1" fill="#ffffff"/><rect x="11" y="13" width="1" height="1" fill="#ffffff"/><rect x="12" y="13" width="2" height="1" fill="#0a0a0c"/><rect x="14" y="13" width="1" height="1" fill="#ffffff"/><rect x="17" y="13" width="1" height="1" fill="#ffffff"/><rect x="18" y="13" width="2" height="1" fill="#0a0a0c"/><rect x="20" y="13" width="1" height="1" fill="#ffffff"/><rect x="3" y="14" width="1" height="1" fill="#ffffff"/><rect x="4" y="14" width="1" height="1" fill="#0a0a0c"/><rect x="5" y="14" width="1" height="1" fill="#ffffff"/><rect x="6" y="14" width="2" height="1" fill="#0a0a0c"/><rect x="8" y="14" width="4" height="1" fill="#ffffff"/><rect x="12" y="14" width="2" height="1" fill="#0a0a0c"/><rect x="14" y="14" width="4" height="1" fill="#ffffff"/><rect x="18" y="14" width="2" height="1" fill="#0a0a0c"/><rect x="20" y="14" width="1" height="1" fill="#ffffff"/><rect x="3" y="15" width="1" height="1" fill="#ffffff"/><rect x="4" y="15" width="1" height="1" fill="#0a0a0c"/><rect x="5" y="15" width="1" height="1" fill="#ffffff"/><rect x="6" y="15" width="2" height="1" fill="#0a0a0c"/><rect x="8" y="15" width="1" height="1" fill="#ffffff"/><rect x="11" y="15" width="1" height="1" fill="#ffffff"/><rect x="12" y="15" width="2" height="1" fill="#0a0a0c"/><rect x="14" y="15" width="1" height="1" fill="#ffffff"/><rect x="17" y="15" width="1" height="1" fill="#ffffff"/><rect x="18" y="15" width="2" height="1" fill="#0a0a0c"/><rect x="20" y="15" width="1" height="1" fill="#ffffff"/><rect x="3" y="16" width="1" height="1" fill="#ffffff"/><rect x="4" y="16" width="1" height="1" fill="#0a0a0c"/><rect x="5" y="16" width="4" height="1" fill="#ffffff"/><rect x="11" y="16" width="4" height="1" fill="#ffffff"/><rect x="17" y="16" width="4" height="1" fill="#ffffff"/><rect x="3" y="17" width="1" height="1" fill="#ffffff"/><rect x="4" y="17" width="18" height="1" fill="#0a0a0c"/><rect x="3" y="18" width="1" height="1" fill="#ffffff"/><rect x="4" y="18" width="13" height="1" fill="#0a0a0c"/><rect x="3" y="19" width="15" height="1" fill="#ffffff"/></svg>
<svg class="b" style="left:0;top:0" width="1511" height="76">
<path d="M1266.5,33.6 H1273.2 V38.4 H1266.5 Q1264,38.4 1264,36 Q1264,33.6 1266.5,33.6 Z" fill="#f5c400"/>
<path d="M1273.1,27.5 Q1273.1,25 1275.65,25 Q1278.2,25 1278.2,27.5 V33.6 H1273.1 Z" fill="#10a040"/>
<rect x="1273.1" y="33.6" width="5.1" height="4.8" fill="#0a2e3a"/>
<rect x="1273.1" y="38.4" width="5.1" height="7.8" fill="#18a8e8"/>
<rect x="1278.2" y="33.6" width="8" height="4.8" fill="#00427f"/>
<rect x="1286.1" y="26" width="4.9" height="20.2" fill="#00427f"/>
<g fill="#00427f">
<rect x="1295" y="26" width="16" height="4.6"/><rect x="1295" y="33.6" width="16" height="4.6"/><rect x="1295" y="41.6" width="16" height="4.6"/>
<rect x="1315" y="26" width="4.8" height="20.2"/>
<path fill-rule="evenodd" d="M1323.5,26 H1332.2 A10.1,10.1 0 0 1 1332.2,46.2 H1323.5 Z M1328.4,30.6 H1332 A5.5,5.5 0 0 1 1332,41.6 H1328.4 Z"/>
<rect x="1345.6" y="26" width="16.2" height="4.6"/><rect x="1345.6" y="33.6" width="16.2" height="4.6"/><rect x="1345.6" y="41.6" width="16.2" height="4.6"/>
<path d="M1365.8,26 H1370.8 V41.6 H1380 V46.2 H1365.8 Z"/>
<path fill-rule="evenodd" d="M1383.2,26 H1393.5 Q1399.2,26 1399.2,31.2 Q1399.2,34.6 1396.8,35.9 Q1401,37.3 1401,41 Q1401,46.2 1395,46.2 H1383.2 Z M1388.2,30.5 H1392.6 Q1394.3,30.5 1394.3,32.2 Q1394.3,33.8 1392.6,33.8 H1388.2 Z M1388.2,38.2 H1394 Q1396,38.2 1396,40 Q1396,41.7 1394,41.7 H1388.2 Z"/>
<rect x="1403.8" y="26" width="16.3" height="4.6"/><rect x="1403.8" y="33.6" width="16.3" height="4.6"/><rect x="1403.8" y="41.6" width="16.3" height="4.6"/>
<path fill-rule="evenodd" d="M1424,26 H1434 Q1441.2,26 1441.2,32.4 Q1441.2,37.2 1436.8,38.6 L1442.5,46.2 H1436.6 L1431.6,39 H1429 V46.2 H1424 Z M1429,30.5 H1433.6 Q1436.2,30.5 1436.2,32.6 Q1436.2,34.6 1433.6,34.6 H1429 Z"/>
<path d="M1460.4,29.3 A10.2,10.2 0 1 0 1463.2,36.8 V33.6 H1453.6 V38.2 H1457.9 A5.4,5.4 0 1 1 1457.0,32.6 Z"/>
</g></svg>
<div class="b" style="left:14px;top:80px;width:85px;height:20px;background:#606067;border-top:1px solid #9c9ca2;box-sizing:border-box;"></div>
<div class="b" style="left:99px;top:80px;width:1px;height:20px;background:#0c0c0e;"></div>
<div class="t" style="left:30.599999999999998px;top:84.84px;font-size:12px;line-height:12px;color:#f2f2f2;"><i style="width:10px">M</i><i style="width:7px">a</i><i style="width:6px">c</i><i style="width:7px">h</i><i style="width:3px">i</i><i style="width:7px">n</i><i style="width:7px">e</i><i style="width:6px">s</i></div>
<div class="b" style="left:100px;top:80px;width:59px;height:20px;background:#606067;border-top:1px solid #9c9ca2;box-sizing:border-box;"></div>
<div class="b" style="left:159px;top:80px;width:1px;height:20px;background:#0c0c0e;"></div>
<div class="t" style="left:115.9px;top:84.84px;font-size:12px;line-height:12px;color:#f2f2f2;"><i style="width:6px">J</i><i style="width:7px">o</i><i style="width:7px">b</i><i style="width:6px">s</i></div>
<div class="b" style="left:160px;top:80px;width:87px;height:20px;background:#606067;border-top:1px solid #9c9ca2;box-sizing:border-box;"></div>
<div class="b" style="left:247px;top:80px;width:1px;height:20px;background:#0c0c0e;"></div>
<div class="t" style="left:176.20000000000002px;top:84.84px;font-size:12px;line-height:12px;color:#f2f2f2;"><i style="width:8px">E</i><i style="width:10px">m</i><i style="width:7px">p</i><i style="width:3px">l</i><i style="width:7px">o</i><i style="width:6px">y</i><i style="width:7px">e</i><i style="width:7px">e</i></div>
<div class="b" style="left:248px;top:80px;width:93px;height:20px;background:#4a4a52;border-top:1px solid #9c9ca2;box-sizing:border-box;"></div>
<div class="b" style="left:341px;top:80px;width:1px;height:20px;background:#0c0c0e;"></div>
<div class="t" style="left:264.7px;top:84.84px;font-size:12px;line-height:12px;color:#f2f2f2;"><i style="width:8px">P</i><i style="width:4px">r</i><i style="width:7px">o</i><i style="width:7px">d</i><i style="width:7px">u</i><i style="width:6px">c</i><i style="width:3px">t</i><i style="width:3px">i</i><i style="width:6px">v</i><i style="width:3px">i</i><i style="width:3px">t</i><i style="width:6px">y</i></div>
<div class="b" style="left:342px;top:80px;width:82px;height:20px;background:#606067;border-top:1px solid #9c9ca2;box-sizing:border-box;"></div>
<div class="b" style="left:424px;top:80px;width:1px;height:20px;background:#0c0c0e;"></div>
<div class="t" style="left:358.7px;top:84.84px;font-size:12px;line-height:12px;color:#f2f2f2;"><i style="width:8px">S</i><i style="width:3px">t</i><i style="width:7px">a</i><i style="width:3px">t</i><i style="width:3px">i</i><i style="width:6px">s</i><i style="width:3px">t</i><i style="width:3px">i</i><i style="width:6px">c</i><i style="width:6px">s</i></div>
<div class="b" style="left:425px;top:80px;width:143px;height:20px;background:#606067;border-top:1px solid #9c9ca2;box-sizing:border-box;"></div>
<div class="b" style="left:568px;top:80px;width:1px;height:20px;background:#0c0c0e;"></div>
<div class="t" style="left:442.09999999999997px;top:84.84px;font-size:12px;line-height:12px;color:#f2f2f2;"><i style="width:8px">P</i><i style="width:7px">e</i><i style="width:4px">r</i><i style="width:3px">f</i><i style="width:7px">o</i><i style="width:4px">r</i><i style="width:10px">m</i><i style="width:7px">a</i><i style="width:7px">n</i><i style="width:6px">c</i><i style="width:7px">e</i><i style="width:3px"> </i><i style="width:9px">R</i><i style="width:7px">e</i><i style="width:7px">p</i><i style="width:7px">o</i><i style="width:4px">r</i><i style="width:3px">t</i></div>
<div class="b" style="left:14px;top:80px;width:1px;height:21px;background:#9c9ca2;"></div>
<div class="b" style="left:14px;top:100px;width:1485px;height:658px;background:#4a4a52;"></div>
<div class="b" style="left:1499px;top:104px;width:12px;height:660px;background:linear-gradient(to right,rgba(0,0,0,0.40),rgba(0,0,0,0.12) 50%,rgba(0,0,0,0));-webkit-mask-image:linear-gradient(to bottom,transparent 0,black 12px);"></div>
<div class="b" style="left:18px;top:758px;width:1481px;height:6px;background:linear-gradient(to bottom,rgba(0,0,0,0.42),rgba(0,0,0,0.2));-webkit-mask-image:linear-gradient(to right,transparent 0,black 16px);"></div>
<div class="b" style="left:14px;top:100px;width:1485px;height:1px;background:#9a9aa0;"></div>
<div class="b" style="left:24px;top:108px;width:346px;height:648px;border:2px solid #6d6d75;box-sizing:border-box;"></div>
<div class="b" style="left:28px;top:104px;width:85px;height:8px;background:#4a4a52;"></div>
<div class="t" style="left:31px;top:103.84px;font-size:12px;line-height:12px;color:#ffffff;font-weight:bold;"><i style="width:9px">Q</i><i style="width:7px">u</i><i style="width:7px">e</i><i style="width:5px">r</i><i style="width:7px">y</i><i style="width:3px"> </i><i style="width:9px">C</i><i style="width:5px">r</i><i style="width:3px">i</i><i style="width:4px">t</i><i style="width:7px">e</i><i style="width:5px">r</i><i style="width:3px">i</i><i style="width:7px">a</i></div>
<div class="t" style="left:28px;top:121.84px;font-size:12px;line-height:12px;color:#f2f2f2;"><i style="width:9px">R</i><i style="width:7px">e</i><i style="width:7px">p</i><i style="width:7px">o</i><i style="width:4px">r</i><i style="width:3px">t</i><i style="width:3px"> </i><i style="width:8px">S</i><i style="width:7px">e</i><i style="width:3px">l</i><i style="width:7px">e</i><i style="width:6px">c</i><i style="width:3px">t</i><i style="width:3px">i</i><i style="width:7px">o</i><i style="width:7px">n</i></div>
<div class="b" style="left:30px;top:137px;width:334px;height:21px;background:#56565e;border:1px solid #74747c;box-sizing:border-box;"></div>
<div class="b" style="left:349px;top:137px;width:15px;height:21px;background:#939399;"></div>
<svg class="b" style="left:351.8px;top:145.8px" width="9.5" height="5.5"><polygon points="0,0 9.5,0 4.75,5.5" fill="#ffffff"/></svg>
<div class="t" style="left:37.2px;top:141.84px;font-size:12px;line-height:12px;color:#f2f2f2;"><i style="width:9px">G</i><i style="width:7px">o</i><i style="width:7px">o</i><i style="width:7px">d</i><i style="width:3px"> </i><i style="width:8px">P</i><i style="width:4px">r</i><i style="width:7px">o</i><i style="width:7px">d</i><i style="width:7px">u</i><i style="width:6px">c</i><i style="width:3px">t</i><i style="width:3px">i</i><i style="width:7px">o</i><i style="width:7px">n</i><i style="width:3px"> </i><i style="width:8px">S</i><i style="width:7px">p</i><i style="width:7px">e</i><i style="width:7px">e</i><i style="width:7px">d</i></div>
<div class="t" style="left:28px;top:172.84px;font-size:12px;line-height:12px;color:#f2f2f2;"><i style="width:7px">F</i><i style="width:3px">i</i><i style="width:3px">l</i><i style="width:3px">t</i><i style="width:7px">e</i><i style="width:4px">r</i><i style="width:3px">:</i></div>
<div class="b" style="left:28px;top:186px;width:338px;height:20px;background:#4a4a52;border-top:2px solid #8e8e95;border-bottom:2px solid #1e1e22;border-right:1px solid #2a2a2e;box-sizing:border-box;"></div>
<svg class="b" style="left:29.8px;top:193px" width="11.8" height="7.4"><polygon points="0,0 11.8,0 5.9,7.4" fill="#ffffff"/></svg>
<div class="t" style="left:46px;top:190.84px;font-size:12px;line-height:12px;color:#f2f2f2;"><i style="width:10px">M</i><i style="width:7px">o</i><i style="width:7px">n</i><i style="width:3px">t</i><i style="width:7px">h</i><i style="width:3px">:</i></div>
<div class="b" style="left:28px;top:206px;width:338px;height:224px;border-left:2px solid #8e8e95;border-bottom:2px solid #8e8e95;box-sizing:border-box;"></div>
<div class="clip" style="left:30px;top:207px;width:316px;height:221px;"><div class="t" style="left:6.8px;top:-1.86px;font-size:12px;line-height:12px;color:#f2f2f2"><i style="width:7px">F</i><i style="width:7px">e</i><i style="width:7px">b</i><i style="width:4px">r</i><i style="width:7px">u</i><i style="width:7px">a</i><i style="width:4px">r</i><i style="width:6px">y</i><i style="width:3px"> </i><i style="width:7px">2</i><i style="width:7px">0</i><i style="width:7px">1</i><i style="width:7px">6</i></div></div>
<div class="b" style="left:30px;top:220px;width:316px;height:1px;background:#8e8e95;"></div>
<div class="clip" style="left:30px;top:207px;width:316px;height:221px;"><div class="t" style="left:6.8px;top:19.14px;font-size:12px;line-height:12px;color:#f2f2f2"><i style="width:6px">J</i><i style="width:7px">a</i><i style="width:7px">n</i><i style="width:7px">u</i><i style="width:7px">a</i><i style="width:4px">r</i><i style="width:6px">y</i><i style="width:3px"> </i><i style="width:7px">2</i><i style="width:7px">0</i><i style="width:7px">1</i><i style="width:7px">6</i></div></div>
<div class="b" style="left:30px;top:241px;width:316px;height:1px;background:#8e8e95;"></div>
<div class="clip" style="left:30px;top:207px;width:316px;height:221px;"><div class="t" style="left:6.8px;top:40.14px;font-size:12px;line-height:12px;color:#f2f2f2"><i style="width:9px">D</i><i style="width:7px">e</i><i style="width:6px">c</i><i style="width:7px">e</i><i style="width:10px">m</i><i style="width:7px">b</i><i style="width:7px">e</i><i style="width:4px">r</i><i style="width:3px"> </i><i style="width:7px">2</i><i style="width:7px">0</i><i style="width:7px">1</i><i style="width:7px">5</i></div></div>
<div class="b" style="left:30px;top:262px;width:316px;height:1px;background:#8e8e95;"></div>
<div class="clip" style="left:30px;top:207px;width:316px;height:221px;"><div class="t" style="left:6.8px;top:61.14px;font-size:12px;line-height:12px;color:#f2f2f2"><i style="width:9px">N</i><i style="width:7px">o</i><i style="width:6px">v</i><i style="width:7px">e</i><i style="width:10px">m</i><i style="width:7px">b</i><i style="width:7px">e</i><i style="width:4px">r</i><i style="width:3px"> </i><i style="width:7px">2</i><i style="width:7px">0</i><i style="width:7px">1</i><i style="width:7px">5</i></div></div>
<div class="b" style="left:30px;top:283px;width:316px;height:1px;background:#8e8e95;"></div>
<div class="clip" style="left:30px;top:207px;width:316px;height:221px;"><div class="t" style="left:6.8px;top:82.14px;font-size:12px;line-height:12px;color:#f2f2f2"><i style="width:9px">O</i><i style="width:6px">c</i><i style="width:3px">t</i><i style="width:7px">o</i><i style="width:7px">b</i><i style="width:7px">e</i><i style="width:4px">r</i><i style="width:3px"> </i><i style="width:7px">2</i><i style="width:7px">0</i><i style="width:7px">1</i><i style="width:7px">5</i></div></div>
<div class="b" style="left:30px;top:304px;width:316px;height:1px;background:#8e8e95;"></div>
<div class="clip" style="left:30px;top:207px;width:316px;height:221px;"><div class="t" style="left:6.8px;top:103.14px;font-size:12px;line-height:12px;color:#f2f2f2"><i style="width:8px">S</i><i style="width:7px">e</i><i style="width:7px">p</i><i style="width:3px">t</i><i style="width:7px">e</i><i style="width:10px">m</i><i style="width:7px">b</i><i style="width:7px">e</i><i style="width:4px">r</i><i style="width:3px"> </i><i style="width:7px">2</i><i style="width:7px">0</i><i style="width:7px">1</i><i style="width:7px">5</i></div></div>
<div class="b" style="left:30px;top:325px;width:316px;height:1px;background:#8e8e95;"></div>
<div class="clip" style="left:30px;top:207px;width:316px;height:221px;"><div class="t" style="left:6.8px;top:124.14px;font-size:12px;line-height:12px;color:#f2f2f2"><i style="width:8px">A</i><i style="width:7px">u</i><i style="width:7px">g</i><i style="width:7px">u</i><i style="width:6px">s</i><i style="width:3px">t</i><i style="width:3px"> </i><i style="width:7px">2</i><i style="width:7px">0</i><i style="width:7px">1</i><i style="width:7px">5</i></div></div>
<div class="b" style="left:30px;top:346px;width:316px;height:1px;background:#8e8e95;"></div>
<div class="clip" style="left:30px;top:207px;width:316px;height:221px;"><div class="t" style="left:6.8px;top:145.14px;font-size:12px;line-height:12px;color:#f2f2f2"><i style="width:6px">J</i><i style="width:7px">u</i><i style="width:3px">l</i><i style="width:6px">y</i><i style="width:3px"> </i><i style="width:7px">2</i><i style="width:7px">0</i><i style="width:7px">1</i><i style="width:7px">5</i></div></div>
<div class="b" style="left:30px;top:368px;width:316px;height:20px;background:#ff8c00;"></div>
<div class="b" style="left:30px;top:367px;width:316px;height:1px;background:#8e8e95;"></div>
<div class="clip" style="left:30px;top:207px;width:316px;height:221px;"><div class="t" style="left:6.8px;top:166.14px;font-size:12px;line-height:12px;color:#141414"><i style="width:6px">J</i><i style="width:7px">u</i><i style="width:7px">n</i><i style="width:7px">e</i><i style="width:3px"> </i><i style="width:7px">2</i><i style="width:7px">0</i><i style="width:7px">1</i><i style="width:7px">5</i></div></div>
<div class="b" style="left:30px;top:388px;width:316px;height:1px;background:#8e8e95;"></div>
<div class="clip" style="left:30px;top:207px;width:316px;height:221px;"><div class="t" style="left:6.8px;top:187.14px;font-size:12px;line-height:12px;color:#f2f2f2"><i style="width:10px">M</i><i style="width:7px">a</i><i style="width:6px">y</i><i style="width:3px"> </i><i style="width:7px">2</i><i style="width:7px">0</i><i style="width:7px">1</i><i style="width:7px">5</i></div></div>
<div class="b" style="left:30px;top:409px;width:316px;height:1px;background:#8e8e95;"></div>
<div class="clip" style="left:30px;top:207px;width:316px;height:221px;"><div class="t" style="left:6.8px;top:208.14px;font-size:12px;line-height:12px;color:#f2f2f2"><i style="width:8px">A</i><i style="width:7px">p</i><i style="width:4px">r</i><i style="width:3px">i</i><i style="width:3px">l</i><i style="width:3px"> </i><i style="width:7px">2</i><i style="width:7px">0</i><i style="width:7px">1</i><i style="width:7px">5</i></div></div>
<div class="b" style="left:346px;top:206px;width:20px;height:224px;background:#8e8e95;"></div>
<div class="b" style="left:348px;top:208px;width:15px;height:220px;background:#4a4a52;"></div>
<div class="b" style="left:348px;top:208px;width:15px;height:20px;background:#939399;border:1px solid #3c3c42;box-sizing:border-box;"></div>
<svg class="b" style="left:350.8px;top:215.5px" width="9.5" height="5.5"><polygon points="0,5.5 9.5,5.5 4.75,0" fill="#ffffff"/></svg>
<div class="b" style="left:348px;top:228px;width:15px;height:1px;background:#8e8e95;"></div>
<div class="b" style="left:348px;top:407px;width:15px;height:20px;background:#939399;border:1px solid #3c3c42;box-sizing:border-box;"></div>
<svg class="b" style="left:350.8px;top:414.5px" width="9.5" height="5.5"><polygon points="0,0 9.5,0 4.75,5.5" fill="#ffffff"/></svg>
<div class="b" style="left:348px;top:406px;width:15px;height:1px;background:#8e8e95;"></div>
<div class="b" style="left:348px;top:262px;width:15px;height:141px;background:#939399;border:1px solid #3c3c42;box-sizing:border-box;"></div>
<div class="b" style="left:352px;top:327px;width:7px;height:1px;background:#f0f0f6;"></div>
<div class="b" style="left:352px;top:330px;width:7px;height:1px;background:#f0f0f6;"></div>
<div class="b" style="left:352px;top:333px;width:7px;height:1px;background:#f0f0f6;"></div>
<div class="b" style="left:352px;top:336px;width:7px;height:1px;background:#f0f0f6;"></div>
<div class="b" style="left:28px;top:430px;width:338px;height:20px;background:#4a4a52;border-top:2px solid #8e8e95;border-bottom:2px solid #1e1e22;border-right:1px solid #2a2a2e;box-sizing:border-box;"></div>
<svg class="b" style="left:29.8px;top:437px" width="11.8" height="7.4"><polygon points="0,0 11.8,0 5.9,7.4" fill="#ffffff"/></svg>
<div class="t" style="left:46px;top:434.84px;font-size:12px;line-height:12px;color:#f2f2f2;"><i style="width:10px">M</i><i style="width:7px">a</i><i style="width:6px">c</i><i style="width:7px">h</i><i style="width:3px">i</i><i style="width:7px">n</i><i style="width:7px">e</i><i style="width:3px">:</i></div>
<div class="b" style="left:28px;top:450px;width:338px;height:224px;border-left:2px solid #8e8e95;border-bottom:2px solid #8e8e95;box-sizing:border-box;"></div>
<div class="clip" style="left:30px;top:451px;width:316px;height:221px;"><div class="t" style="left:6.8px;top:-1.86px;font-size:12px;line-height:12px;color:#f2f2f2"><i style="width:7px">T</i><i style="width:9px">H</i><i style="width:7px">8</i><i style="width:7px">2</i><i style="width:4px">-</i><i style="width:7px">8</i></div></div>
<div class="b" style="left:30px;top:464px;width:316px;height:1px;background:#8e8e95;"></div>
<div class="clip" style="left:30px;top:451px;width:316px;height:221px;"><div class="t" style="left:6.8px;top:19.14px;font-size:12px;line-height:12px;color:#f2f2f2"><i style="width:8px">V</i><i style="width:7px">a</i><i style="width:4px">r</i><i style="width:3px">i</i><i style="width:10px">m</i><i style="width:7px">a</i><i style="width:3px">t</i><i style="width:4px">r</i><i style="width:3px">i</i><i style="width:6px">x</i><i style="width:7px">1</i><i style="width:7px">0</i><i style="width:7px">5</i></div></div>
<div class="b" style="left:30px;top:485px;width:316px;height:1px;background:#8e8e95;"></div>
<div class="clip" style="left:30px;top:451px;width:316px;height:221px;"><div class="t" style="left:6.8px;top:40.14px;font-size:12px;line-height:12px;color:#f2f2f2"><i style="width:11px">W</i><i style="width:7px">p</i><i style="width:3px">i</i><i style="width:7px">T</i><i style="width:7px">e</i><i style="width:6px">s</i><i style="width:3px">t</i><i style="width:7px">_</i><i style="width:9px">C</i><i style="width:9px">D</i><i style="width:7px">1</i><i style="width:7px">0</i><i style="width:7px">2</i><i style="width:4px">-</i><i style="width:7px">8</i><i style="width:4px">-</i><i style="width:8px">P</i><i style="width:7px">5</i><i style="width:7px">L</i></div></div>
<div class="b" style="left:30px;top:506px;width:316px;height:1px;background:#8e8e95;"></div>
<div class="clip" style="left:30px;top:451px;width:316px;height:221px;"><div class="t" style="left:6.8px;top:61.14px;font-size:12px;line-height:12px;color:#f2f2f2"><i style="width:11px">W</i><i style="width:7px">p</i><i style="width:3px">i</i><i style="width:7px">T</i><i style="width:7px">e</i><i style="width:6px">s</i><i style="width:3px">t</i><i style="width:7px">_</i><i style="width:8px">X</i><i style="width:7px">L</i><i style="width:7px">1</i><i style="width:7px">0</i><i style="width:7px">5</i><i style="width:4px">-</i><i style="width:7px">6</i><i style="width:7px">L</i></div></div>
<div class="b" style="left:30px;top:527px;width:316px;height:1px;background:#8e8e95;"></div>
<div class="clip" style="left:30px;top:451px;width:316px;height:221px;"><div class="t" style="left:6.8px;top:82.14px;font-size:12px;line-height:12px;color:#f2f2f2"><i style="width:11px">W</i><i style="width:7px">p</i><i style="width:3px">i</i><i style="width:7px">T</i><i style="width:7px">e</i><i style="width:6px">s</i><i style="width:3px">t</i><i style="width:7px">_</i><i style="width:8px">X</i><i style="width:7px">L</i><i style="width:7px">1</i><i style="width:7px">0</i><i style="width:7px">5</i><i style="width:4px">-</i><i style="width:7px">8</i><i style="width:4px">-</i><i style="width:8px">P</i><i style="width:7px">5</i><i style="width:7px">L</i></div></div>
<div class="b" style="left:30px;top:548px;width:316px;height:1px;background:#8e8e95;"></div>
<div class="clip" style="left:30px;top:451px;width:316px;height:221px;"><div class="t" style="left:6.8px;top:103.14px;font-size:12px;line-height:12px;color:#f2f2f2"><i style="width:11px">W</i><i style="width:8px">P</i><i style="width:3px">I</i><i style="width:7px">T</i><i style="width:7px">e</i><i style="width:6px">s</i><i style="width:3px">t</i><i style="width:7px">_</i><i style="width:8px">X</i><i style="width:7px">L</i><i style="width:7px">1</i><i style="width:7px">4</i><i style="width:7px">5</i><i style="width:4px">-</i><i style="width:7px">6</i><i style="width:7px">L</i></div></div>
<div class="b" style="left:30px;top:569px;width:316px;height:1px;background:#8e8e95;"></div>
<div class="clip" style="left:30px;top:451px;width:316px;height:221px;"><div class="t" style="left:6.8px;top:124.14px;font-size:12px;line-height:12px;color:#f2f2f2"><i style="width:11px">W</i><i style="width:7px">p</i><i style="width:3px">i</i><i style="width:7px">T</i><i style="width:7px">e</i><i style="width:6px">s</i><i style="width:3px">t</i><i style="width:7px">_</i><i style="width:8px">X</i><i style="width:7px">L</i><i style="width:7px">7</i><i style="width:7px">5</i><i style="width:4px">-</i><i style="width:7px">5</i><i style="width:7px">L</i></div></div>
<div class="b" style="left:30px;top:590px;width:316px;height:1px;background:#8e8e95;"></div>
<div class="clip" style="left:30px;top:451px;width:316px;height:221px;"><div class="t" style="left:6.8px;top:145.14px;font-size:12px;line-height:12px;color:#f2f2f2"><i style="width:11px">W</i><i style="width:7px">p</i><i style="width:3px">i</i><i style="width:7px">T</i><i style="width:7px">e</i><i style="width:6px">s</i><i style="width:3px">t</i><i style="width:7px">_</i><i style="width:8px">X</i><i style="width:7px">L</i><i style="width:7px">7</i><i style="width:7px">5</i><i style="width:4px">-</i><i style="width:7px">8</i><i style="width:4px">-</i><i style="width:8px">P</i><i style="width:7px">5</i><i style="width:7px">L</i></div></div>
<div class="b" style="left:30px;top:611px;width:316px;height:1px;background:#8e8e95;"></div>
<div class="clip" style="left:30px;top:451px;width:316px;height:221px;"><div class="t" style="left:6.8px;top:166.14px;font-size:12px;line-height:12px;color:#f2f2f2"><i style="width:8px">X</i><i style="width:7px">L</i><i style="width:4px">-</i><i style="width:7px">1</i><i style="width:7px">0</i><i style="width:7px">6</i><i style="width:4px">-</i><i style="width:7px">8</i><i style="width:4px">-</i><i style="width:8px">P</i></div></div>
<div class="b" style="left:30px;top:632px;width:316px;height:1px;background:#8e8e95;"></div>
<div class="clip" style="left:30px;top:451px;width:316px;height:221px;"><div class="t" style="left:6.8px;top:187.14px;font-size:12px;line-height:12px;color:#f2f2f2"><i style="width:8px">X</i><i style="width:7px">L</i><i style="width:7px">1</i><i style="width:7px">0</i><i style="width:7px">6</i><i style="width:4px">-</i><i style="width:7px">e</i><i style="width:6px">x</i><i style="width:3px">t</i><i style="width:7px">e</i><i style="width:4px">r</i><i style="width:7px">n</i><i style="width:3px"> </i><i style="width:5px">*</i></div></div>
<div class="b" style="left:30px;top:654px;width:316px;height:18px;background:#ff8c00;"></div>
<div class="b" style="left:30px;top:653px;width:316px;height:1px;background:#8e8e95;"></div>
<div class="clip" style="left:30px;top:451px;width:316px;height:221px;"><div class="t" style="left:6.8px;top:208.14px;font-size:12px;line-height:12px;color:#141414"><i style="width:8px">X</i><i style="width:7px">L</i><i style="width:7px">1</i><i style="width:7px">6</i><i style="width:7px">2</i><i style="width:7px">_</i><i style="width:8px">S</i><i style="width:3px">I</i><i style="width:8px">S</i></div></div>
<div class="b" style="left:346px;top:450px;width:20px;height:224px;background:#8e8e95;"></div>
<div class="b" style="left:348px;top:452px;width:15px;height:220px;background:#4a4a52;"></div>
<div class="b" style="left:348px;top:452px;width:15px;height:20px;background:#939399;border:1px solid #3c3c42;box-sizing:border-box;"></div>
<svg class="b" style="left:350.8px;top:459.5px" width="9.5" height="5.5"><polygon points="0,5.5 9.5,5.5 4.75,0" fill="#ffffff"/></svg>
<div class="b" style="left:348px;top:472px;width:15px;height:1px;background:#8e8e95;"></div>
<div class="b" style="left:348px;top:651px;width:15px;height:20px;background:#939399;border:1px solid #3c3c42;box-sizing:border-box;"></div>
<svg class="b" style="left:350.8px;top:658.5px" width="9.5" height="5.5"><polygon points="0,0 9.5,0 4.75,5.5" fill="#ffffff"/></svg>
<div class="b" style="left:348px;top:650px;width:15px;height:1px;background:#8e8e95;"></div>
<div class="b" style="left:348px;top:628px;width:15px;height:21px;background:#939399;border:1px solid #3c3c42;box-sizing:border-box;"></div>
<div class="b" style="left:352px;top:632px;width:7px;height:1px;background:#f0f0f6;"></div>
<div class="b" style="left:352px;top:635px;width:7px;height:1px;background:#f0f0f6;"></div>
<div class="b" style="left:352px;top:638px;width:7px;height:1px;background:#f0f0f6;"></div>
<div class="b" style="left:352px;top:641px;width:7px;height:1px;background:#f0f0f6;"></div>
<div class="t" style="left:28px;top:686.84px;font-size:12px;line-height:12px;color:#f2f2f2;"><i style="width:10px">M</i><i style="width:7px">a</i><i style="width:6px">c</i><i style="width:7px">h</i><i style="width:3px">i</i><i style="width:7px">n</i><i style="width:7px">e</i><i style="width:6px">s</i><i style="width:3px"> </i><i style="width:3px">t</i><i style="width:7px">a</i><i style="width:7px">g</i><i style="width:7px">g</i><i style="width:7px">e</i><i style="width:7px">d</i><i style="width:3px"> </i><i style="width:7px">b</i><i style="width:6px">y</i><i style="width:3px"> </i><i style="width:5px">*</i><i style="width:3px"> </i><i style="width:7px">a</i><i style="width:4px">r</i><i style="width:7px">e</i><i style="width:3px"> </i><i style="width:7px">o</i><i style="width:3px">f</i><i style="width:3px">f</i><i style="width:3px">l</i><i style="width:3px">i</i><i style="width:7px">n</i><i style="width:7px">e</i><i style="width:3px">.</i></div>
<div class="t" style="left:28px;top:702.84px;font-size:12px;line-height:12px;color:#f2f2f2;"><i style="width:9px">N</i><i style="width:7px">o</i><i style="width:3px">t</i><i style="width:3px"> </i><i style="width:7px">a</i><i style="width:3px">l</i><i style="width:3px">l</i><i style="width:3px"> </i><i style="width:4px">r</i><i style="width:7px">e</i><i style="width:7px">p</i><i style="width:7px">o</i><i style="width:4px">r</i><i style="width:3px">t</i><i style="width:6px">s</i><i style="width:3px"> </i><i style="width:7px">a</i><i style="width:4px">r</i><i style="width:7px">e</i><i style="width:3px"> </i><i style="width:7px">a</i><i style="width:6px">v</i><i style="width:7px">a</i><i style="width:3px">i</i><i style="width:3px">l</i><i style="width:7px">a</i><i style="width:7px">b</i><i style="width:3px">l</i><i style="width:7px">e</i><i style="width:3px">.</i></div>
<div class="b" style="left:139px;top:726px;width:113px;height:23px;border:1px dotted #ffffff;box-sizing:border-box;"></div>
<div class="b" style="left:141px;top:728px;width:109px;height:19px;background:#939399;"></div>
<div class="t" style="left:154px;top:731.84px;font-size:12px;line-height:12px;color:#f2f2f2;"><i style="width:9px">U</i><i style="width:7px">p</i><i style="width:7px">d</i><i style="width:7px">a</i><i style="width:3px">t</i><i style="width:7px">e</i><i style="width:3px"> </i><i style="width:4px">r</i><i style="width:7px">e</i><i style="width:7px">p</i><i style="width:7px">o</i><i style="width:4px">r</i><i style="width:3px">t</i><i style="width:6px">s</i></div>
<div class="b" style="left:374px;top:106px;width:29px;height:19px;background:#3e3e46;border:1px solid #7c7c84;box-sizing:border-box;"></div>
<div class="b" style="left:380px;top:107px;width:16px;height:16px;background:#f3f5f9;box-shadow:0 0 0 0.5px #9a9aa0;"></div>
<div class="b" style="left:409px;top:106px;width:29px;height:19px;background:#3e3e46;border:1px solid #7c7c84;box-sizing:border-box;"></div>
<div class="b" style="left:415px;top:107px;width:16px;height:16px;background:#f3f5f9;box-shadow:0 0 0 0.5px #9a9aa0;"></div>
<div class="b" style="left:444px;top:106px;width:29px;height:19px;background:#3e3e46;border:1px solid #7c7c84;box-sizing:border-box;"></div>
<div class="b" style="left:450px;top:107px;width:16px;height:16px;background:#f3f5f9;box-shadow:0 0 0 0.5px #9a9aa0;"></div>
<div class="b" style="left:479px;top:106px;width:29px;height:19px;background:#3e3e46;border:1px solid #7c7c84;box-sizing:border-box;"></div>
<div class="b" style="left:485px;top:107px;width:16px;height:16px;background:#f3f5f9;box-shadow:0 0 0 0.5px #9a9aa0;"></div>
<svg class="b" style="left:0;top:0" width="520" height="130">
<g stroke="#9a9ca2" stroke-width="1" fill="#9a9ca2">
<line x1="383.5" y1="110" x2="383.5" y2="119"/>
<polygon points="385,114.5 389,110.5 389,118.5" stroke="none"/><line x1="389" y1="114.5" x2="393.5" y2="114.5"/>
<polygon points="418.5,114.5 422.5,110.5 422.5,118.5" stroke="none"/><line x1="422" y1="114.5" x2="428" y2="114.5"/>
<polygon points="462,114.5 458,110.5 458,118.5" stroke="none"/><line x1="452" y1="114.5" x2="458" y2="114.5"/>
<polygon points="495.5,114.5 491.5,110.5 491.5,118.5" stroke="none"/><line x1="487" y1="114.5" x2="492" y2="114.5"/>
<line x1="497" y1="110" x2="497" y2="119"/>
</g></svg>
<div class="b" style="left:1280px;top:106px;width:29px;height:19px;background:#939399;"></div>
<div class="b" style="left:1315px;top:106px;width:29px;height:19px;background:#939399;"></div>
<svg class="b" style="left:0;top:0" width="1511" height="130">
<g>
<line x1="1292.6" y1="116.6" x2="1296.3" y2="120.3" stroke="#34343a" stroke-width="2.6" stroke-linecap="round"/>
<line x1="1292.6" y1="116.6" x2="1296.3" y2="120.3" stroke="#f0f0f0" stroke-width="1" stroke-dasharray="1,1"/>
<circle cx="1290.4" cy="114.3" r="3" fill="#ffffff" stroke="#34343a" stroke-width="1"/>
<line x1="1298" y1="108.5" x2="1298" y2="114.5" stroke="#5a5e66" stroke-width="1.3"/>
<line x1="1295.5" y1="111.7" x2="1301.5" y2="111.7" stroke="#5a5e66" stroke-width="1.3"/>
<line x1="1297.5" y1="108" x2="1297.5" y2="114" stroke="#e6ecf6" stroke-width="1.2"/>
<line x1="1295" y1="111.1" x2="1301" y2="111.1" stroke="#e6ecf6" stroke-width="1.2"/>
<line x1="1327.6" y1="116.6" x2="1331.3" y2="120.3" stroke="#34343a" stroke-width="2.6" stroke-linecap="round"/>
<line x1="1327.6" y1="116.6" x2="1331.3" y2="120.3" stroke="#f0f0f0" stroke-width="1" stroke-dasharray="1,1"/>
<circle cx="1325.4" cy="114.3" r="3" fill="#ffffff" stroke="#34343a" stroke-width="1"/>
<line x1="1330.3" y1="111.1" x2="1336" y2="111.1" stroke="#e6ecf6" stroke-width="1.3"/>
</g></svg>
<div class="b" style="left:1350px;top:106px;width:146px;height:21px;background:#56565e;border:1px solid #808088;box-sizing:border-box;"></div>
<div class="b" style="left:1481px;top:107px;width:15px;height:19px;background:#939399;"></div>
<svg class="b" style="left:1483.8px;top:114.5px" width="9.5" height="5.5"><polygon points="0,0 9.5,0 4.75,5.5" fill="#ffffff"/></svg>
<div class="t" style="left:1357.6px;top:110.84px;font-size:12px;line-height:12px;color:#f2f2f2;"><i style="width:7px">F</i><i style="width:7px">u</i><i style="width:3px">l</i><i style="width:3px">l</i><i style="width:3px"> </i><i style="width:8px">P</i><i style="width:7px">a</i><i style="width:7px">g</i><i style="width:7px">e</i></div>
<div class="b" style="left:1481px;top:129px;width:17px;height:567px;background:#8e8e95;"></div>
<div class="b" style="left:1482px;top:130px;width:15px;height:565px;background:#4a4a52;"></div>
<div class="b" style="left:1482px;top:130px;width:15px;height:20px;background:#939399;border:1px solid #3c3c42;box-sizing:border-box;"></div>
<svg class="b" style="left:1484.8px;top:137.5px" width="9.5" height="5.5"><polygon points="0,5.5 9.5,5.5 4.75,0" fill="#ffffff"/></svg>
<div class="b" style="left:1482px;top:150px;width:15px;height:1px;background:#8e8e95;"></div>
<div class="b" style="left:1482px;top:675px;width:15px;height:20px;background:#939399;border:1px solid #3c3c42;box-sizing:border-box;"></div>
<svg class="b" style="left:1484.8px;top:682.8px" width="9.5" height="5.5"><polygon points="0,0 9.5,0 4.75,5.5" fill="#ffffff"/></svg>
<div class="b" style="left:1482px;top:674px;width:15px;height:1px;background:#8e8e95;"></div>
<div class="b" style="left:372px;top:696px;width:1109px;height:17px;background:#8e8e95;"></div>
<div class="b" style="left:373px;top:697px;width:1107px;height:15px;background:#4a4a52;"></div>
<div class="b" style="left:374px;top:698px;width:18px;height:13px;background:#939399;"></div>
<svg class="b" style="left:379px;top:699.7px" width="5.5" height="9.8"><polygon points="5.5,0 5.5,9.8 0,4.9" fill="#ffffff"/></svg>
<div class="b" style="left:392px;top:697px;width:1px;height:15px;background:#8e8e95;"></div>
<div class="b" style="left:1459px;top:697px;width:1px;height:15px;background:#8e8e95;"></div>
<div class="b" style="left:1460px;top:697px;width:20px;height:15px;background:#939399;border:1px solid #3c3c42;box-sizing:border-box;"></div>
<svg class="b" style="left:1467.9px;top:699.7px" width="5.5" height="9.8"><polygon points="0,0 5.5,4.9 0,9.8" fill="#ffffff"/></svg>
<div class="b" style="left:1483px;top:712px;width:15px;height:1px;background:#8c9aaa;"></div>
<div class="b" style="left:1497px;top:698px;width:1px;height:15px;background:#8c9aaa;"></div>
<div class="t" style="left:906.8px;top:716.33px;font-size:10px;line-height:10px;color:#ffffff;font-weight:bold;"><i style="width:7px">P</i><i style="width:6px">a</i><i style="width:6px">g</i><i style="width:6px">e</i><i style="width:3px"> </i><i style="width:6px">1</i><i style="width:3px"> </i><i style="width:6px">o</i><i style="width:3px">f</i><i style="width:3px"> </i><i style="width:6px">1</i></div>
<div class="t" style="left:372px;top:736.84px;font-size:12px;line-height:12px;color:#f2f2f2;"><i style="width:9px">U</i><i style="width:7px">p</i><i style="width:7px">d</i><i style="width:7px">a</i><i style="width:3px">t</i><i style="width:7px">e</i><i style="width:7px">d</i><i style="width:3px">:</i><i style="width:3px"> </i><i style="width:7px">4</i><i style="width:3px">/</i><i style="width:7px">5</i><i style="width:3px">/</i><i style="width:7px">1</i><i style="width:7px">6</i><i style="width:3px"> </i><i style="width:7px">1</i><i style="width:7px">1</i><i style="width:3px">:</i><i style="width:7px">4</i><i style="width:7px">5</i><i style="width:3px"> </i><i style="width:8px">A</i><i style="width:10px">M</i></div>
<div class="b" style="left:1385px;top:732px;width:29px;height:19px;background:#939399;"></div>
<div class="b" style="left:1423px;top:732px;width:29px;height:19px;background:#939399;"></div>
<div class="b" style="left:1461px;top:732px;width:29px;height:19px;background:#939399;"></div>
<svg class="b" style="left:0;top:0" width="1511" height="764">
<circle cx="1399.6" cy="740.8" r="5.6" fill="none" stroke="#a4aeba" stroke-width="0.8"/>
<line x1="1393.3" y1="735.5" x2="1393.3" y2="741" stroke="#585c64" stroke-width="1.1"/>
<polygon points="1390.6,740 1396,740 1393.3,743.6" fill="#585c64"/>
<line x1="1405.9" y1="740.5" x2="1405.9" y2="746" stroke="#585c64" stroke-width="1.1"/>
<polygon points="1403.2,741.5 1408.6,741.5 1405.9,737.8" fill="#585c64"/>
<rect x="1433" y="735" width="9" height="6" fill="#e8ecf4" stroke="#4a4a4e" stroke-width="0.8"/>
<rect x="1429.5" y="740" width="16" height="7" rx="1.5" fill="#e0e2e8" stroke="#4a4a4e" stroke-width="1"/>
<rect x="1431" y="743" width="13" height="1.5" fill="#202022"/>
<rect x="1468.3" y="734.3" width="13.4" height="13.4" fill="#8e8e94" stroke="#000000" stroke-width="1.3"/>
<rect x="1470.5" y="735" width="9" height="5" fill="#9a9aa0" stroke="#000" stroke-width="0.8"/>
<rect x="1470" y="742.5" width="10.5" height="5" fill="#000000"/>
<rect x="1477" y="743.5" width="2" height="3" fill="#a0a0a6"/>
</g></svg>
<div class="b" style="left:540px;top:685px;width:777px;height:5px;background:#828282;"></div>
<div class="b" style="left:1312px;top:140px;width:5px;height:550px;background:#828282;"></div>
<div class="b" style="left:535px;top:135px;width:777px;height:550px;background:#ffffff;border-left:1px solid #000;border-top:1px solid #000;border-right:2px solid #000;border-bottom:2px solid #000;box-sizing:border-box;"></div>
<div class="t" style="left:567px;top:159.20px;font-size:13px;line-height:13px;color:#0b4890;letter-spacing:-0.06px;">Good Production Speed June 2015</div>
<div class="b" style="left:563px;top:187px;width:720px;height:1px;background:#111;"></div>
<div class="t" style="left:567px;top:201.19px;font-size:11px;line-height:11px;color:#111111;letter-spacing:0.1px;">XL162_SIS / 4890</div>
<div class="b" style="left:1214px;top:154px;width:46px;height:22px;background:#e82000;"></div>
<div class="t" style="left:1219.6px;top:158.99px;font-size:11px;line-height:11px;color:#ffffff;letter-spacing:0.1px;"><i style="width:7px">P</i><i style="width:4px">r</i><i style="width:2px">i</i><i style="width:6px">n</i><i style="width:6px">e</i><i style="width:6px">c</i><i style="width:3px">t</i></div>
<svg class="b" style="left:1260px;top:154px" width="24" height="24">
<path d="M11,4 A7,7 0 0 1 18,11 L11,11 Z" fill="#00f0ff"/>
<path d="M11,11 L4.5,11 A7,7 0 0 0 11,18 Z" fill="#ffff00"/>
<path d="M11,11 L17.5,11 A7,7 0 0 1 11,18 Z" fill="#ff00ff"/>
<line x1="2" y1="10.8" x2="21" y2="10.8" stroke="#000" stroke-width="1"/>
</svg>
<div class="b" style="left:563px;top:641px;width:720px;height:1px;background:#111;"></div>
<div class="t" style="left:1253.5px;top:644.68px;font-size:9px;line-height:9px;color:#222222;letter-spacing:0.2px;">Seite 1</div>
<svg class="b" style="left:0;top:0" width="1511" height="764"><rect x="623" y="226" width="652" height="319" fill="#e0e6f2"/><line x1="623" y1="522.5" x2="1275" y2="522.5" stroke="#c4c8d0" stroke-width="1" stroke-dasharray="1.8,1.9"/><line x1="619" y1="522.5" x2="622" y2="522.5" stroke="#222" stroke-width="1"/><line x1="623" y1="498.5" x2="1275" y2="498.5" stroke="#c4c8d0" stroke-width="1" stroke-dasharray="1.8,1.9"/><line x1="619" y1="498.5" x2="622" y2="498.5" stroke="#222" stroke-width="1"/><line x1="623" y1="475.5" x2="1275" y2="475.5" stroke="#c4c8d0" stroke-width="1" stroke-dasharray="1.8,1.9"/><line x1="619" y1="475.5" x2="622" y2="475.5" stroke="#222" stroke-width="1"/><line x1="623" y1="452.5" x2="1275" y2="452.5" stroke="#c4c8d0" stroke-width="1" stroke-dasharray="1.8,1.9"/><line x1="619" y1="452.5" x2="622" y2="452.5" stroke="#222" stroke-width="1"/><line x1="623" y1="429.5" x2="1275" y2="429.5" stroke="#c4c8d0" stroke-width="1" stroke-dasharray="1.8,1.9"/><line x1="619" y1="429.5" x2="622" y2="429.5" stroke="#222" stroke-width="1"/><line x1="623" y1="405.5" x2="1275" y2="405.5" stroke="#c4c8d0" stroke-width="1" stroke-dasharray="1.8,1.9"/><line x1="619" y1="405.5" x2="622" y2="405.5" stroke="#222" stroke-width="1"/><line x1="623" y1="382.5" x2="1275" y2="382.5" stroke="#c4c8d0" stroke-width="1" stroke-dasharray="1.8,1.9"/><line x1="619" y1="382.5" x2="622" y2="382.5" stroke="#222" stroke-width="1"/><line x1="623" y1="359.5" x2="1275" y2="359.5" stroke="#c4c8d0" stroke-width="1" stroke-dasharray="1.8,1.9"/><line x1="619" y1="359.5" x2="622" y2="359.5" stroke="#222" stroke-width="1"/><line x1="623" y1="336.5" x2="1275" y2="336.5" stroke="#c4c8d0" stroke-width="1" stroke-dasharray="1.8,1.9"/><line x1="619" y1="336.5" x2="622" y2="336.5" stroke="#222" stroke-width="1"/><line x1="623" y1="312.5" x2="1275" y2="312.5" stroke="#c4c8d0" stroke-width="1" stroke-dasharray="1.8,1.9"/><line x1="619" y1="312.5" x2="622" y2="312.5" stroke="#222" stroke-width="1"/><line x1="623" y1="289.5" x2="1275" y2="289.5" stroke="#c4c8d0" stroke-width="1" stroke-dasharray="1.8,1.9"/><line x1="619" y1="289.5" x2="622" y2="289.5" stroke="#222" stroke-width="1"/><line x1="623" y1="266.5" x2="1275" y2="266.5" stroke="#c4c8d0" stroke-width="1" stroke-dasharray="1.8,1.9"/><line x1="619" y1="266.5" x2="622" y2="266.5" stroke="#222" stroke-width="1"/><line x1="623" y1="242.5" x2="1275" y2="242.5" stroke="#c4c8d0" stroke-width="1" stroke-dasharray="1.8,1.9"/><line x1="619" y1="242.5" x2="622" y2="242.5" stroke="#222" stroke-width="1"/><line x1="619" y1="545.5" x2="622" y2="545.5" stroke="#222" stroke-width="1"/><rect x="793.27" y="355" width="15.5" height="190" fill="#004b8d"/><rect x="812.98" y="420.9" width="15.5" height="124.10000000000002" fill="#004b8d"/><rect x="832.69" y="321.6" width="15.5" height="223.39999999999998" fill="#004b8d"/><rect x="852.40" y="373.3" width="15.5" height="171.7" fill="#004b8d"/><rect x="872.11" y="348.2" width="15.5" height="196.8" fill="#004b8d"/><rect x="931.24" y="310.9" width="15.5" height="234.10000000000002" fill="#004b8d"/><rect x="970.66" y="352.4" width="15.5" height="192.60000000000002" fill="#004b8d"/><rect x="990.37" y="325" width="15.5" height="220" fill="#004b8d"/><rect x="1010.08" y="316.8" width="15.5" height="228.2" fill="#004b8d"/><rect x="1148.05" y="235.1" width="15.5" height="309.9" fill="#004b8d"/><line x1="623" y1="545.5" x2="1275" y2="545.5" stroke="#3a3a3a" stroke-width="1" stroke-dasharray="2.2,1.5"/><line x1="622.5" y1="226" x2="622.5" y2="545.5" stroke="#111" stroke-width="1"/><line x1="653" y1="337" x2="1245" y2="337" stroke="#8a8f98" stroke-width="2"/><circle cx="734" cy="337" r="13.5" fill="rgba(242,10,12,0.88)" stroke="#ff1010" stroke-width="1.8"/><circle cx="833" cy="485" r="13.5" fill="rgba(242,10,12,0.88)" stroke="#ff1010" stroke-width="1.8"/></svg>
<div class="t" style="left:724px;top:327.4px;width:20px;text-align:center;font-size:15.5px;line-height:18px;color:#fff;-webkit-text-stroke:0.45px #fff;">2</div>
<div class="t" style="left:823px;top:475.4px;width:20px;text-align:center;font-size:15.5px;line-height:18px;color:#fff;-webkit-text-stroke:0.45px #fff;">1</div>
<div class="t" style="left:560px;width:57px;text-align:right;top:541.98px;font-size:9px;line-height:9px;color:#333;">0</div>
<div class="t" style="left:560px;width:57px;text-align:right;top:518.98px;font-size:9px;line-height:9px;color:#333;">1.000</div>
<div class="t" style="left:560px;width:57px;text-align:right;top:494.98px;font-size:9px;line-height:9px;color:#333;">2.000</div>
<div class="t" style="left:560px;width:57px;text-align:right;top:471.98px;font-size:9px;line-height:9px;color:#333;">3.000</div>
<div class="t" style="left:560px;width:57px;text-align:right;top:448.98px;font-size:9px;line-height:9px;color:#333;">4.000</div>
<div class="t" style="left:560px;width:57px;text-align:right;top:425.98px;font-size:9px;line-height:9px;color:#333;">5.000</div>
<div class="t" style="left:560px;width:57px;text-align:right;top:401.98px;font-size:9px;line-height:9px;color:#333;">6.000</div>
<div class="t" style="left:560px;width:57px;text-align:right;top:378.98px;font-size:9px;line-height:9px;color:#333;">7.000</div>
<div class="t" style="left:560px;width:57px;text-align:right;top:355.98px;font-size:9px;line-height:9px;color:#333;">8.000</div>
<div class="t" style="left:560px;width:57px;text-align:right;top:332.98px;font-size:9px;line-height:9px;color:#333;">9.000</div>
<div class="t" style="left:560px;width:57px;text-align:right;top:308.98px;font-size:9px;line-height:9px;color:#333;">10.000</div>
<div class="t" style="left:560px;width:57px;text-align:right;top:285.98px;font-size:9px;line-height:9px;color:#333;">11.000</div>
<div class="t" style="left:560px;width:57px;text-align:right;top:262.98px;font-size:9px;line-height:9px;color:#333;">12.000</div>
<div class="t" style="left:560px;width:57px;text-align:right;top:238.98px;font-size:9px;line-height:9px;color:#333;">13.000</div>
<div class="t" style="left:570px;top:381px;width:20px;text-align:center;font-size:9px;line-height:10px;color:#333;transform:rotate(-90deg);transform-origin:10px 5px;">ph</div>
<div class="t" style="left:663.05px;top:549px;font-size:9px;line-height:10px;color:#444;letter-spacing:0.15px;transform:rotate(45deg);transform-origin:0 0;">Mon, 6/1/15</div>
<div class="t" style="left:682.76px;top:549px;font-size:9px;line-height:10px;color:#444;letter-spacing:0.15px;transform:rotate(45deg);transform-origin:0 0;">Tue, 6/2/15</div>
<div class="t" style="left:702.47px;top:549px;font-size:9px;line-height:10px;color:#444;letter-spacing:0.15px;transform:rotate(45deg);transform-origin:0 0;">Wed, 6/3/15</div>
<div class="t" style="left:722.18px;top:549px;font-size:9px;line-height:10px;color:#444;letter-spacing:0.15px;transform:rotate(45deg);transform-origin:0 0;">Thu, 6/4/15</div>
<div class="t" style="left:741.89px;top:549px;font-size:9px;line-height:10px;color:#444;letter-spacing:0.15px;transform:rotate(45deg);transform-origin:0 0;">Fri, 6/5/15</div>
<div class="t" style="left:761.60px;top:549px;font-size:9px;line-height:10px;color:#444;letter-spacing:0.15px;transform:rotate(45deg);transform-origin:0 0;">Sat, 6/6/15</div>
<div class="t" style="left:781.31px;top:549px;font-size:9px;line-height:10px;color:#444;letter-spacing:0.15px;transform:rotate(45deg);transform-origin:0 0;">Sun, 6/7/15</div>
<div class="t" style="left:801.02px;top:549px;font-size:9px;line-height:10px;color:#444;letter-spacing:0.15px;transform:rotate(45deg);transform-origin:0 0;">Mon, 6/8/15</div>
<div class="t" style="left:820.73px;top:549px;font-size:9px;line-height:10px;color:#444;letter-spacing:0.15px;transform:rotate(45deg);transform-origin:0 0;">Tue, 6/9/15</div>
<div class="t" style="left:840.44px;top:549px;font-size:9px;line-height:10px;color:#444;letter-spacing:0.15px;transform:rotate(45deg);transform-origin:0 0;">Wed, 6/10/15</div>
<div class="t" style="left:860.15px;top:549px;font-size:9px;line-height:10px;color:#444;letter-spacing:0.15px;transform:rotate(45deg);transform-origin:0 0;">Thu, 6/11/15</div>
<div class="t" style="left:879.86px;top:549px;font-size:9px;line-height:10px;color:#444;letter-spacing:0.15px;transform:rotate(45deg);transform-origin:0 0;">Fri, 6/12/15</div>
<div class="t" style="left:899.57px;top:549px;font-size:9px;line-height:10px;color:#444;letter-spacing:0.15px;transform:rotate(45deg);transform-origin:0 0;">Sat, 6/13/15</div>
<div class="t" style="left:919.28px;top:549px;font-size:9px;line-height:10px;color:#444;letter-spacing:0.15px;transform:rotate(45deg);transform-origin:0 0;">Sun, 6/14/15</div>
<div class="t" style="left:938.99px;top:549px;font-size:9px;line-height:10px;color:#444;letter-spacing:0.15px;transform:rotate(45deg);transform-origin:0 0;">Mon, 6/15/15</div>
<div class="t" style="left:958.70px;top:549px;font-size:9px;line-height:10px;color:#444;letter-spacing:0.15px;transform:rotate(45deg);transform-origin:0 0;">Tue, 6/16/15</div>
<div class="t" style="left:978.41px;top:549px;font-size:9px;line-height:10px;color:#444;letter-spacing:0.15px;transform:rotate(45deg);transform-origin:0 0;">Wed, 6/17/15</div>
<div class="t" style="left:998.12px;top:549px;font-size:9px;line-height:10px;color:#444;letter-spacing:0.15px;transform:rotate(45deg);transform-origin:0 0;">Thu, 6/18/15</div>
<div class="t" style="left:1017.83px;top:549px;font-size:9px;line-height:10px;color:#444;letter-spacing:0.15px;transform:rotate(45deg);transform-origin:0 0;">Fri, 6/19/15</div>
<div class="t" style="left:1037.54px;top:549px;font-size:9px;line-height:10px;color:#444;letter-spacing:0.15px;transform:rotate(45deg);transform-origin:0 0;">Sat, 6/20/15</div>
<div class="t" style="left:1057.25px;top:549px;font-size:9px;line-height:10px;color:#444;letter-spacing:0.15px;transform:rotate(45deg);transform-origin:0 0;">Sun, 6/21/15</div>
<div class="t" style="left:1076.96px;top:549px;font-size:9px;line-height:10px;color:#444;letter-spacing:0.15px;transform:rotate(45deg);transform-origin:0 0;">Mon, 6/22/15</div>
<div class="t" style="left:1096.67px;top:549px;font-size:9px;line-height:10px;color:#444;letter-spacing:0.15px;transform:rotate(45deg);transform-origin:0 0;">Tue, 6/23/15</div>
<div class="t" style="left:1116.38px;top:549px;font-size:9px;line-height:10px;color:#444;letter-spacing:0.15px;transform:rotate(45deg);transform-origin:0 0;">Wed, 6/24/15</div>
<div class="t" style="left:1136.09px;top:549px;font-size:9px;line-height:10px;color:#444;letter-spacing:0.15px;transform:rotate(45deg);transform-origin:0 0;">Thu, 6/25/15</div>
<div class="t" style="left:1155.80px;top:549px;font-size:9px;line-height:10px;color:#444;letter-spacing:0.15px;transform:rotate(45deg);transform-origin:0 0;">Fri, 6/26/15</div>
<div class="t" style="left:1175.51px;top:549px;font-size:9px;line-height:10px;color:#444;letter-spacing:0.15px;transform:rotate(45deg);transform-origin:0 0;">Sat, 6/27/15</div>
<div class="t" style="left:1195.22px;top:549px;font-size:9px;line-height:10px;color:#444;letter-spacing:0.15px;transform:rotate(45deg);transform-origin:0 0;">Sun, 6/28/15</div>
<div class="t" style="left:1214.93px;top:549px;font-size:9px;line-height:10px;color:#444;letter-spacing:0.15px;transform:rotate(45deg);transform-origin:0 0;">Mon, 6/29/15</div>
<div class="t" style="left:1234.64px;top:549px;font-size:9px;line-height:10px;color:#444;letter-spacing:0.15px;transform:rotate(45deg);transform-origin:0 0;">Tue, 6/30/15</div>
<div class="b" style="left:801px;top:603px;width:244px;height:18px;border:1px solid #000;box-sizing:border-box;background:#fff;"></div>
<div class="b" style="left:804px;top:611px;width:20px;height:2px;background:#8a8f98;"></div>
<div class="t" style="left:827px;top:608.88px;font-size:9px;line-height:9px;color:#333;letter-spacing:0.05px;">Monthly average</div>
<div class="b" style="left:900px;top:609px;width:8px;height:7px;background:#004b8d;"></div>
<div class="t" style="left:911px;top:608.88px;font-size:9px;line-height:9px;color:#333;letter-spacing:0.1px;">Average good production speed</div>
</body></html>
